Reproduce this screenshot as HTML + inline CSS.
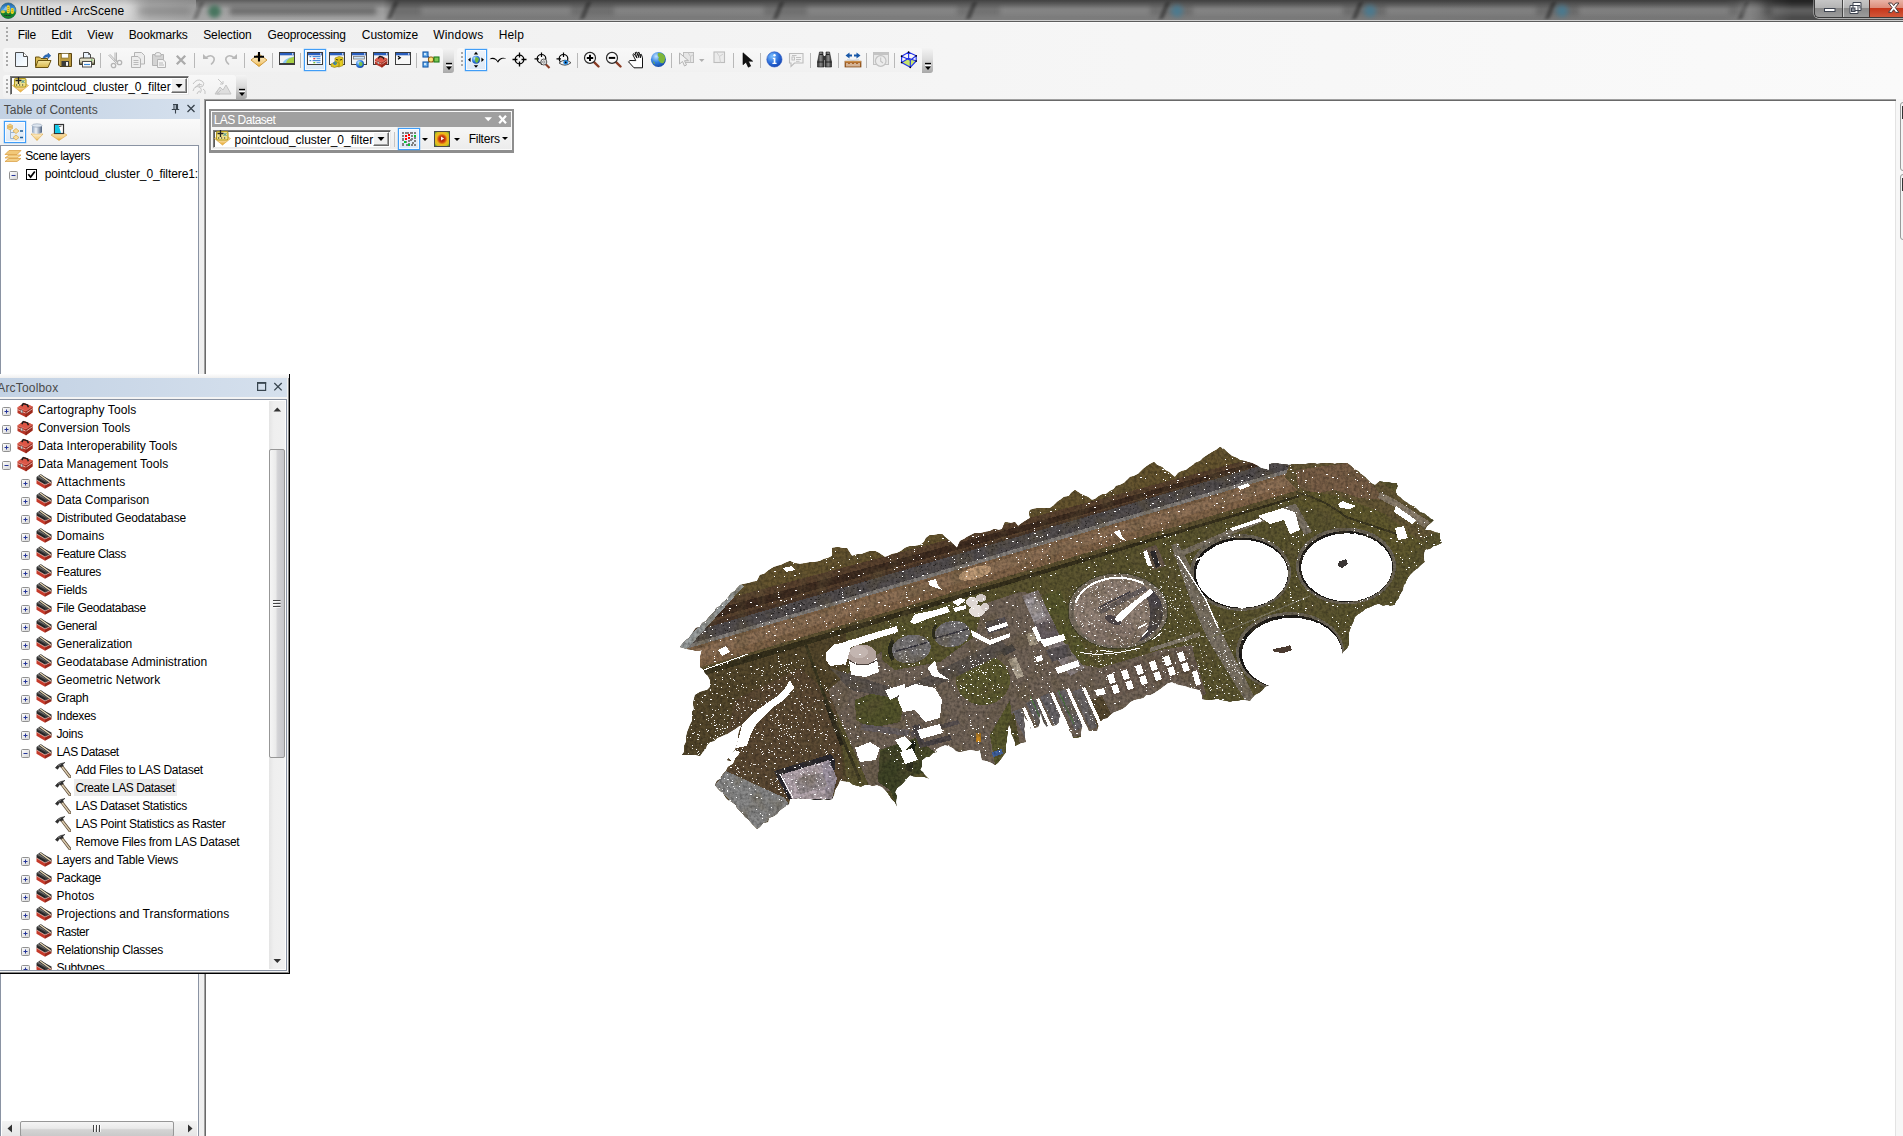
<!DOCTYPE html>
<html><head><meta charset="utf-8"><title>Untitled - ArcScene</title>
<style>
html,body{margin:0;padding:0;width:1903px;height:1136px;overflow:hidden;background:linear-gradient(90deg,#eeeeee 0,#f0f0f0 300px,#f5f5f5 950px,#fafafa 1903px);font-family:"Liberation Sans", sans-serif;}
.a{position:absolute;display:block}
.t{position:absolute;white-space:pre;font-family:"Liberation Sans", sans-serif;}
.sep{position:absolute;width:1px;background:#b8b8b8}
.grip{position:absolute;width:2px;background-image:linear-gradient(#a8a8a8 50%,transparent 50%);background-size:2px 4px}
.tb{position:absolute;background:linear-gradient(#f8f8f8,#f1f1f1);border-radius:3px}
.hl{position:absolute;box-sizing:border-box;border:1px solid #409df7;background:linear-gradient(#eef4fb,#dde9f6);box-shadow:inset 0 0 0 1px rgba(255,255,255,.75),0 0 0 .4px rgba(64,157,247,.5)}
.ovf{position:absolute;background:linear-gradient(#f4f4f4 0%,#dcdcdc 45%,#a8a8a8 100%);border-radius:0 3px 3px 0}
.combo{position:absolute;box-sizing:border-box;background:#fff;border:1px solid;border-color:#7a7a7a #e8e8e8 #e8e8e8 #7a7a7a;box-shadow:inset 1px 1px 0 #5a5a5a}
.cbtn{position:absolute;box-sizing:border-box;background:#f0f0f0;border:1px solid;border-color:#fff #6a6a6a #6a6a6a #fff;box-shadow:inset -1px -1px 0 #a0a0a0}

</style></head><body>
<svg width="0" height="0" style="position:absolute">
<defs>
<linearGradient id="gbox" x1="0" y1="0" x2="1" y2="1"><stop offset="0" stop-color="#fff"/><stop offset="1" stop-color="#d4d4d4"/></linearGradient>
<g id="expp"><rect x="0.500" y="0.500" width="8" height="8" rx="1" fill="url(#gbox)" stroke="#919191"/><path d="M2.500 4.500h4M4.500 2.500v4" stroke="#26369a" stroke-width="1"/></g>
<g id="expm"><rect x="0.500" y="0.500" width="8" height="8" rx="1" fill="url(#gbox)" stroke="#919191"/><path d="M2.500 4.500h4" stroke="#26369a" stroke-width="1"/></g>
<g id="tbx"><path d="M.5 5.500L7 1l8.500 3.500v6L9 15.200.5 11z" fill="#b93425"/><path d="M.5 5.500L7 1l8.500 3.500L9 9z" fill="#dc5646"/><path d="M9 9l6.500-4.500v6L9 15.200z" fill="#9c2a1d"/><path d="M.5 7.600L9 11.200l6.500-4.500" fill="none" stroke="#f3cfc8" stroke-width=".8"/><path d="M.5 5.500L9 9l6.500-4.500" fill="none" stroke="#ef9386" stroke-width=".6"/><path d="M9 9v6.200" stroke="#7f1f15" stroke-width=".7"/><path d="M4.800 4.200l1.400-2.600 4.200 1.300 1 2.300" fill="none" stroke="#1c1c1c" stroke-width="1.500" stroke-linejoin="round"/><path d="M3.800 7.800l1.700.7v2.700l-1.700-.7z" fill="#ececec" stroke="#555" stroke-width=".5"/></g>
<g id="tset"><path d="M.5 6L9 11v3.700L.5 9.700z" fill="#c53a2a"/><path d="M9 11l6.500-3v3.200L9 14.700z" fill="#98281c"/><path d="M.5 3L4 .6l11.500 5.900V8L9 11 .5 6z" fill="#3b3b3b"/><path d="M2 2.300l11.800 6.300" stroke="#777" stroke-width="1.400"/><path d="M4 1l11.300 8.200" stroke="#2a2a2a" stroke-width="2.400"/><path d="M4 1l11.300 8.200" stroke="#ead9b6" stroke-width="1.300"/><path d="M.5 6L9 11l6.500-3" fill="none" stroke="#e9a59b" stroke-width=".7"/><path d="M1 4.500l8 4.700" stroke="#1a1a1a" stroke-width="1"/></g>
<g id="ham"><path d="M6.300 3.700l8.600 11.200" stroke="#5c4a36" stroke-width="3" stroke-linecap="round"/><path d="M6.300 3.700l8.600 11.200" stroke="#dccdb0" stroke-width="1.500" stroke-linecap="round"/><path d="M.4 5.800L2.600 3.300 5.200 1.700 10 .4 7.800 2.200 8.200 4 5.800 5 4.800 4.200 2.600 7.300z" fill="#303030" stroke="#1a1a1a" stroke-width=".5" stroke-linejoin="round"/><path d="M3 3.800l3-1.600" stroke="#8a8a8a" stroke-width=".7"/></g>
</defs></svg>
<svg width="0" height="0" style="position:absolute"><defs>
<linearGradient id="gdia2" x1="0" y1="0" x2="0" y2="1"><stop offset="0" stop-color="#fdf1d2"/><stop offset=".7" stop-color="#f4cf85"/><stop offset="1" stop-color="#eaa51c"/></linearGradient>
<g id="lasico"><path d="M.5 8.500l8-4.500 8 4.500-8 6.500z" fill="url(#gdia2)" stroke="#d9a544" stroke-width=".7"/><rect x="2.500" y="1.500" width="11.500" height="8.500" rx="1.500" fill="#efe08a" stroke="#b39a18" stroke-width="1.100"/>
<path d="M6.500 0v7M3.500 3.500h6" stroke="#222" stroke-width="1.300"/><path d="M9.500 3l3 3M12.500 3l-3 3" stroke="#2a8a9a" stroke-width=".9"/><path d="M4 8h1.200M7 8h1.200M10 8h1.200" stroke="#222" stroke-width="1"/></g>
</defs></svg>

<div id="root" class="a" style="left:0;top:0;width:1903px;height:1136px;overflow:hidden">
<!-- title bar -->
<div class="a" style="left:0;top:0;width:1903px;height:21px;background:linear-gradient(90deg,#cbcbcb 0,#d0d0d0 60px,#cacaca 125px,#aaaaaa 150px,#9c9c9c 198px,#a0a0a0 215px,#9d9d9d 383px,#6e6e6e 396px,#6f6f6f 700px,#727272 1000px,#6b6b6b 1500px,#6a6a6a 1725px,#787878 1750px,#4c4c4c 1775px,#3a3a3a 1792px,#3a3a3a 1815px)"></div>
<div class="a" style="left:196px;top:0;width:1707px;height:9px;background:linear-gradient(180deg,rgba(0,0,0,.42) 0,rgba(0,0,0,.22) 4px,rgba(0,0,0,0) 9px)"></div>
<div class="a" style="left:0;top:0;width:196px;height:6px;background:linear-gradient(180deg,rgba(0,0,0,.12),rgba(0,0,0,0))"></div>
<div class="a" style="left:0;top:12px;width:1903px;height:9px;background:linear-gradient(180deg,rgba(255,255,255,0),rgba(255,255,255,.10))"></div>
<!-- blurred background tabs -->
<div class="a" style="left:138px;top:6px;width:52px;height:10px;background:rgba(90,90,90,.28);filter:blur(3px)"></div>
<div class="a" style="left:230px;top:7px;width:146px;height:8px;background:rgba(60,60,60,.5);filter:blur(2.500px)"></div>
<div class="a" style="left:196px;top:2px;width:5px;height:17px;background:rgba(40,40,40,.35);filter:blur(1.500px);transform:skewX(-22deg)"></div>
<div class="a" style="left:421px;top:7px;width:150px;height:8px;background:rgba(175,175,175,.33);filter:blur(2.500px)"></div>
<div class="a" style="left:390px;top:2px;width:5px;height:17px;background:rgba(25,25,25,.45);filter:blur(1.500px);transform:skewX(-22deg)"></div>
<div class="a" style="left:614px;top:7px;width:150px;height:8px;background:rgba(175,175,175,.33);filter:blur(2.500px)"></div>
<div class="a" style="left:583px;top:2px;width:5px;height:17px;background:rgba(25,25,25,.45);filter:blur(1.500px);transform:skewX(-22deg)"></div>
<div class="a" style="left:807px;top:7px;width:150px;height:8px;background:rgba(175,175,175,.33);filter:blur(2.500px)"></div>
<div class="a" style="left:776px;top:2px;width:5px;height:17px;background:rgba(25,25,25,.45);filter:blur(1.500px);transform:skewX(-22deg)"></div>
<div class="a" style="left:1000px;top:7px;width:150px;height:8px;background:rgba(175,175,175,.33);filter:blur(2.500px)"></div>
<div class="a" style="left:969px;top:2px;width:5px;height:17px;background:rgba(25,25,25,.45);filter:blur(1.500px);transform:skewX(-22deg)"></div>
<div class="a" style="left:1193px;top:7px;width:150px;height:8px;background:rgba(175,175,175,.33);filter:blur(2.500px)"></div>
<div class="a" style="left:1162px;top:2px;width:5px;height:17px;background:rgba(25,25,25,.45);filter:blur(1.500px);transform:skewX(-22deg)"></div>
<div class="a" style="left:1386px;top:7px;width:150px;height:8px;background:rgba(175,175,175,.33);filter:blur(2.500px)"></div>
<div class="a" style="left:1355px;top:2px;width:5px;height:17px;background:rgba(25,25,25,.45);filter:blur(1.500px);transform:skewX(-22deg)"></div>
<div class="a" style="left:1579px;top:7px;width:150px;height:8px;background:rgba(175,175,175,.33);filter:blur(2.500px)"></div>
<div class="a" style="left:1548px;top:2px;width:5px;height:17px;background:rgba(25,25,25,.45);filter:blur(1.500px);transform:skewX(-22deg)"></div>
<div class="a" style="left:1772px;top:7px;width:150px;height:8px;background:rgba(175,175,175,.33);filter:blur(2.500px)"></div>
<div class="a" style="left:1741px;top:2px;width:5px;height:17px;background:rgba(25,25,25,.45);filter:blur(1.500px);transform:skewX(-22deg)"></div>
<div class="a" style="left:208px;top:5px;width:13px;height:13px;border-radius:7px;background:#3a6e55;filter:blur(2px);opacity:.85"></div>
<div class="a" style="left:1171px;top:5px;width:12px;height:12px;border-radius:6px;background:#3d7f9d;filter:blur(2.500px);opacity:.7"></div>
<div class="a" style="left:1364px;top:5px;width:12px;height:12px;border-radius:6px;background:#3d7f9d;filter:blur(2.500px);opacity:.7"></div>
<div class="a" style="left:1556px;top:5px;width:12px;height:12px;border-radius:6px;background:#3d7f9d;filter:blur(2.500px);opacity:.7"></div>
<div class="a" style="left:1740px;top:4px;width:22px;height:12px;background:rgba(150,150,150,.4);filter:blur(3px)"></div>
<!-- title glow behind text -->
<div class="a" style="left:10px;top:2px;width:125px;height:16px;background:rgba(255,255,255,.35);filter:blur(6px)"></div>
<!-- frame line -->
<div class="a" style="left:0;top:20px;width:1903px;height:1px;background:#cfcfcf"></div>
<div class="a" style="left:0;top:21px;width:1903px;height:1px;background:#5c5c5c"></div>
<div class="a" style="left:0;top:22px;width:1903px;height:1px;background:#fcfcfc"></div>
<!-- caption buttons -->
<div class="a" style="left:1814px;top:0;width:89px;height:18px;box-sizing:border-box;border:1px solid #3a3a3a;border-top:none;border-right:none;border-radius:0 0 0 5px;background:linear-gradient(#c6c6c6 0,#b4b4b4 45%,#8a8a8a 50%,#9c9c9c 100%);box-shadow:0 1px 0 rgba(255,255,255,.55),-1px 0 0 rgba(255,255,255,.35)"></div>
<div class="a" style="left:1842px;top:0;width:1px;height:17px;background:#444"></div>
<div class="a" style="left:1843px;top:0;width:1px;height:17px;background:rgba(255,255,255,.5)"></div>
<div class="a" style="left:1869px;top:0;width:34px;height:17px;background:linear-gradient(#e9b3a6 0,#dd8d7b 45%,#c7361a 50%,#d0573a 100%);border-left:1px solid #5a2a22"></div>
<svg class="a" style="left:1814px;top:0" width="89" height="18" viewBox="0 0 89 18">
 <rect x="10.500" y="8.500" width="10.500" height="3" fill="#fff" stroke="#3e4450" stroke-width="1"/>
 <path d="M38.500 2.500h8v8h-8z M35.500 5.500h8v8h-8z" fill="#fff" stroke="#3e4450" transform="translate(0.500 0)"/>
 <path d="M41 5.500h5v3" fill="none" stroke="#3e4450"/>
 <rect x="37.500" y="8" width="3.500" height="3.500" fill="#8a8f98" stroke="#3e4450" stroke-width="1"/>
 <path transform="translate(4.500 0)" d="M70 3h3.200l2 2.600 2-2.600h3.200l-3.600 4.600 3.600 4.800h-3.200l-2-2.700-2 2.700h-3.200l3.600-4.800z" fill="#fff" stroke="#4a3a3a" stroke-width="1" stroke-linejoin="round"/>
</svg>
<!-- menu gripper -->
<div class="grip" style="left:6px;top:27px;height:16px"></div>
<!-- toolbar strips -->
<div class="tb" style="left:3px;top:48px;width:440px;height:24px"></div>
<div class="ovf" style="left:443px;top:48px;width:11px;height:25px"></div>
<div class="tb" style="left:457px;top:48px;width:465px;height:24px"></div>
<div class="ovf" style="left:922px;top:48px;width:11px;height:25px"></div>
<div class="tb" style="left:3px;top:75px;width:233px;height:23px"></div>
<div class="ovf" style="left:236px;top:75px;width:11px;height:24px"></div>
<div class="grip" style="left:6px;top:52px;height:16px"></div>
<div class="grip" style="left:461px;top:52px;height:16px"></div>
<div class="grip" style="left:6px;top:79px;height:16px"></div>
<!-- overflow glyphs -->
<svg class="a" style="left:445px;top:62px" width="8" height="9" viewBox="0 0 8 9"><path d="M1 1.500h6" stroke="#000" stroke-width="1.300"/><path d="M1 3.500h6" stroke="#fff" stroke-width="1"/><path d="M1 4.500h6l-3 3.500z" fill="#000"/></svg>
<svg class="a" style="left:924px;top:62px" width="8" height="9" viewBox="0 0 8 9"><path d="M1 1.500h6" stroke="#000" stroke-width="1.300"/><path d="M1 3.500h6" stroke="#fff" stroke-width="1"/><path d="M1 4.500h6l-3 3.500z" fill="#000"/></svg>
<svg class="a" style="left:238px;top:88px" width="8" height="9" viewBox="0 0 8 9"><path d="M1 1.500h6" stroke="#000" stroke-width="1.300"/><path d="M1 3.500h6" stroke="#fff" stroke-width="1"/><path d="M1 4.500h6l-3 3.500z" fill="#000"/></svg>
<!-- separators toolbar 1 -->
<div class="sep" style="left:100px;top:53px;height:15px"></div>
<div class="sep" style="left:194px;top:53px;height:15px"></div>
<div class="sep" style="left:244px;top:53px;height:15px"></div>
<div class="sep" style="left:272px;top:53px;height:15px"></div>
<div class="sep" style="left:300px;top:53px;height:15px"></div>
<div class="sep" style="left:416px;top:53px;height:15px"></div>
<!-- highlighted buttons -->
<div class="hl" style="left:304px;top:49px;width:22px;height:22px"></div>
<div class="hl" style="left:465px;top:49px;width:22px;height:22px"></div>
<!-- layer combo (toolbar 2) -->
<div class="combo" style="left:10px;top:76px;width:179px;height:19px"></div>
<div class="cbtn" style="left:171px;top:78px;width:16px;height:15px"></div>
<svg class="a" style="left:175px;top:84px" width="8" height="4" viewBox="0 0 8 4"><path d="M0.500 0h7l-3.500 4z" fill="#000"/></svg>
<!-- separators tools toolbar -->
<div class="sep" style="left:577px;top:53px;height:15px"></div>
<div class="sep" style="left:671px;top:53px;height:15px"></div>
<div class="sep" style="left:733px;top:53px;height:15px"></div>
<div class="sep" style="left:760px;top:53px;height:15px"></div>
<div class="sep" style="left:810px;top:53px;height:15px"></div>
<div class="sep" style="left:838px;top:53px;height:15px"></div>
<div class="sep" style="left:866px;top:53px;height:15px"></div>
<div class="sep" style="left:894px;top:53px;height:15px"></div>

<!-- scene view -->
<div class="a" style="left:204px;top:99px;width:1692px;height:1037px;background:#fff"></div>
<div class="a" style="left:204px;top:99px;width:1692px;height:1px;background:#a0a0a0"></div>
<div class="a" style="left:204px;top:100px;width:1692px;height:1px;background:#696969"></div>
<div class="a" style="left:204px;top:99px;width:1px;height:1037px;background:#a0a0a0"></div>
<div class="a" style="left:205px;top:100px;width:1px;height:1036px;background:#696969"></div>
<div class="a" style="left:1895px;top:101px;width:1px;height:1035px;background:#e3e3e3"></div>
<div class="a" style="left:1896px;top:99px;width:7px;height:1037px;background:#f7f7f7"></div>
<!-- right auto-hide tabs -->
<div class="a" style="left:1900px;top:102px;width:6px;height:69px;box-sizing:border-box;border:1px solid #9a9a9a;border-radius:3px 0 0 3px;background:#f4f4f4"></div>
<div class="a" style="left:1900px;top:174px;width:6px;height:66px;box-sizing:border-box;border:1px solid #9a9a9a;border-radius:3px 0 0 3px;background:#f4f4f4"></div>
<div class="a" style="left:1902px;top:106px;width:1px;height:13px;background:#333"></div>
<div class="a" style="left:1902px;top:178px;width:1px;height:13px;background:#333"></div>

<svg class="a" style="left:660px;top:430px" width="800" height="420" viewBox="660 430 800 420" shape-rendering="crispEdges">
<defs>
<clipPath id="csil"><polygon points="680.0,647.0 683.0,643.0 686.0,640.0 689.0,638.0 691.0,635.0 693.0,632.0 696.0,628.0 700.0,627.0 702.0,623.0 706.0,621.0 709.0,617.0 712.0,614.0 715.0,611.0 716.0,608.0 720.0,606.0 722.0,603.0 726.0,600.0 729.0,596.0 731.0,593.0 735.0,591.0 737.0,588.0 740.0,585.0 744.0,584.0 749.0,583.0 752.0,582.0 757.0,581.0 760.0,575.0 764.0,574.0 769.0,570.0 774.0,567.0 777.0,566.0 781.0,565.0 785.0,563.0 790.0,561.0 794.0,563.0 800.0,564.0 806.0,563.0 811.0,562.0 815.0,562.0 820.0,561.0 824.0,559.0 828.0,558.0 832.0,556.0 832.0,552.0 832.0,548.0 838.0,547.0 842.0,548.0 847.0,548.0 850.0,553.0 852.0,556.0 858.0,554.0 862.0,554.0 867.0,552.0 870.0,551.0 875.0,551.0 879.0,553.0 885.0,557.0 888.0,556.0 892.0,554.0 897.0,553.0 901.0,551.0 905.0,548.0 910.0,546.0 915.0,546.0 920.0,545.0 924.0,542.0 926.0,538.0 930.0,535.0 934.0,535.0 939.0,534.0 942.0,534.0 945.0,537.0 950.0,541.0 953.0,544.0 957.0,548.0 960.0,541.0 964.0,539.0 967.0,537.0 971.0,535.0 975.0,533.0 981.0,533.0 985.0,532.0 990.0,531.0 994.0,529.0 999.0,530.0 1002.0,529.0 1005.0,522.0 1011.0,523.0 1015.0,522.0 1018.0,526.0 1022.0,523.0 1025.0,521.0 1030.0,518.0 1029.0,513.0 1030.0,510.0 1033.0,509.0 1038.0,508.0 1041.0,508.0 1045.0,508.0 1050.0,508.0 1053.0,506.0 1057.0,502.0 1060.0,500.0 1064.0,497.0 1069.0,496.0 1071.0,493.0 1075.0,490.0 1078.0,492.0 1083.0,495.0 1088.0,497.0 1092.0,500.0 1095.0,499.0 1099.0,496.0 1103.0,494.0 1106.0,494.0 1110.0,491.0 1114.0,489.0 1116.0,486.0 1120.0,485.0 1124.0,483.0 1127.0,480.0 1130.0,477.0 1134.0,476.0 1138.0,474.0 1141.0,471.0 1143.0,469.0 1147.0,466.0 1150.0,464.0 1154.0,462.0 1157.0,465.0 1162.0,467.0 1165.0,470.0 1169.0,472.0 1171.0,474.0 1175.0,477.0 1178.0,473.0 1182.0,471.0 1186.0,470.0 1190.0,467.0 1193.0,465.0 1195.0,463.0 1200.0,461.0 1203.0,458.0 1206.0,456.0 1209.0,454.0 1214.0,451.0 1216.0,450.0 1220.0,447.0 1224.0,449.0 1227.0,452.0 1232.0,456.0 1237.0,458.0 1240.0,460.0 1245.0,461.0 1248.0,462.0 1252.0,463.0 1258.0,466.0 1261.0,468.0 1265.0,469.0 1269.0,470.0 1269.0,464.0 1274.0,463.0 1277.0,463.0 1281.0,464.0 1285.0,464.0 1289.0,465.0 1293.0,464.0 1298.0,464.0 1302.0,464.0 1306.0,464.0 1310.0,463.0 1314.0,463.0 1317.0,464.0 1322.0,463.0 1327.0,463.0 1330.0,463.0 1335.0,464.0 1338.0,463.0 1342.0,463.0 1347.0,463.0 1351.0,466.0 1354.0,469.0 1358.0,471.0 1361.0,474.0 1365.0,477.0 1368.0,480.0 1371.0,483.0 1375.0,485.0 1380.0,481.0 1385.0,482.0 1389.0,482.0 1393.0,483.0 1397.0,483.0 1398.0,486.0 1396.0,491.0 1397.0,495.0 1400.0,497.0 1403.0,500.0 1408.0,503.0 1410.0,505.0 1414.0,506.0 1418.0,510.0 1420.0,512.0 1424.0,513.0 1428.0,516.0 1430.0,518.0 1434.0,520.0 1431.0,523.0 1427.0,526.0 1425.0,530.0 1430.0,530.0 1435.0,532.0 1440.0,533.0 1440.0,538.0 1442.0,543.0 1438.0,545.0 1433.0,547.0 1430.0,549.0 1425.0,550.0 1424.0,554.0 1424.0,559.0 1425.0,562.0 1421.0,565.0 1417.0,569.0 1414.0,571.0 1410.0,575.0 1407.0,580.0 1406.0,583.0 1404.0,585.0 1403.0,590.0 1400.0,595.0 1399.0,598.0 1396.0,602.0 1395.0,605.0 1390.0,606.0 1387.0,605.0 1383.0,606.0 1379.0,604.0 1375.0,605.0 1371.0,607.0 1366.0,609.0 1362.0,612.0 1359.0,614.0 1355.0,617.0 1354.0,621.0 1352.0,625.0 1350.0,630.0 1349.0,634.0 1349.0,639.0 1349.0,645.0 1347.0,649.0 1343.0,652.0 1342.0,654.0 1339.0,658.0 1336.0,662.0 1334.0,666.0 1332.0,669.0 1330.0,673.0 1328.0,677.0 1326.0,680.0 1324.0,683.0 1321.0,686.0 1320.0,690.0 1315.0,690.0 1311.0,688.0 1306.0,689.0 1304.0,689.0 1298.0,687.0 1294.0,687.0 1290.0,687.0 1286.0,688.0 1283.0,686.0 1277.0,687.0 1273.0,685.0 1269.0,685.0 1265.0,687.0 1263.0,690.0 1259.0,693.0 1255.0,695.0 1252.0,698.0 1250.0,701.0 1245.0,700.0 1241.0,700.0 1238.0,701.0 1234.0,701.0 1230.0,702.0 1225.0,701.0 1220.0,700.0 1217.0,699.0 1212.0,700.0 1206.0,700.0 1202.0,699.0 1202.0,695.0 1200.0,690.0 1196.0,689.0 1191.0,688.0 1188.0,687.0 1185.0,686.0 1180.0,685.0 1176.0,684.0 1172.0,682.0 1168.0,683.0 1164.0,686.0 1160.0,689.0 1157.0,691.0 1154.0,693.0 1150.0,695.0 1146.0,695.0 1143.0,698.0 1138.0,699.0 1134.0,700.0 1130.0,702.0 1125.0,707.0 1122.0,709.0 1117.0,711.0 1114.0,712.0 1110.0,715.0 1107.0,718.0 1103.0,719.0 1100.0,722.0 1098.0,727.0 1097.0,731.0 1094.0,731.0 1089.0,731.0 1087.0,726.0 1084.0,723.0 1083.0,719.0 1083.0,723.0 1082.0,727.0 1081.0,732.0 1081.0,737.0 1077.0,738.0 1073.0,738.0 1072.0,734.0 1069.0,730.0 1067.0,725.0 1066.0,721.0 1065.0,719.0 1062.0,714.0 1059.0,718.0 1059.0,722.0 1056.0,725.0 1051.0,726.0 1047.0,727.0 1044.0,723.0 1042.0,718.0 1041.0,713.0 1039.0,718.0 1040.0,722.0 1038.0,727.0 1031.0,729.0 1030.0,725.0 1028.0,721.0 1025.0,718.0 1024.0,713.0 1024.0,716.0 1024.0,721.0 1025.0,725.0 1024.0,729.0 1025.0,734.0 1025.0,738.0 1026.0,742.0 1021.0,743.0 1015.0,746.0 1015.0,742.0 1013.0,737.0 1011.0,733.0 1011.0,729.0 1009.0,724.0 1008.0,728.0 1008.0,731.0 1007.0,737.0 1007.0,741.0 1006.0,744.0 1006.0,747.0 1006.0,752.0 1003.0,756.0 1001.0,759.0 998.0,763.0 995.0,765.0 992.0,763.0 987.0,761.0 982.0,760.0 981.0,755.0 980.0,750.0 977.0,751.0 972.0,750.0 969.0,750.0 964.0,751.0 960.0,752.0 956.0,751.0 953.0,748.0 949.0,746.0 945.0,745.0 940.0,747.0 935.0,750.0 937.0,752.0 933.0,753.0 929.0,757.0 926.0,757.0 922.0,760.0 922.0,766.0 920.0,770.0 923.0,772.0 925.0,775.0 929.0,779.0 924.0,777.0 919.0,777.0 915.0,777.0 910.0,775.0 907.0,778.0 904.0,782.0 901.0,785.0 897.0,788.0 895.0,792.0 897.0,796.0 896.0,802.0 897.0,807.0 895.0,803.0 892.0,800.0 890.0,797.0 888.0,794.0 885.0,790.0 882.0,787.0 877.0,785.0 872.0,786.0 870.0,785.0 865.0,785.0 861.0,787.0 857.0,786.0 853.0,785.0 849.0,782.0 843.0,781.0 840.0,780.0 838.0,785.0 835.0,790.0 834.0,795.0 832.0,799.0 828.0,800.0 824.0,799.0 818.0,800.0 815.0,800.0 811.0,799.0 806.0,799.0 803.0,799.0 798.0,798.0 794.0,799.0 790.0,799.0 789.0,804.0 786.0,806.0 783.0,808.0 779.0,811.0 777.0,814.0 774.0,816.0 769.0,818.0 768.0,822.0 763.0,823.0 760.0,827.0 757.0,829.0 754.0,826.0 752.0,824.0 748.0,819.0 745.0,817.0 743.0,814.0 741.0,812.0 737.0,808.0 736.0,805.0 732.0,802.0 728.0,800.0 726.0,798.0 723.0,793.0 720.0,791.0 718.0,789.0 715.0,785.0 717.0,781.0 720.0,779.0 723.0,774.0 726.0,771.0 728.0,767.0 733.0,764.0 735.0,760.0 731.0,761.0 727.0,760.0 731.0,756.0 732.0,754.0 735.0,750.0 737.0,745.0 738.0,741.0 738.0,737.0 739.0,732.0 740.0,729.0 742.0,725.0 739.0,726.0 735.0,729.0 730.0,732.0 727.0,734.0 722.0,736.0 717.0,738.0 714.0,741.0 710.0,742.0 707.0,745.0 706.0,748.0 702.0,753.0 700.0,756.0 696.0,755.0 690.0,755.0 687.0,755.0 682.0,755.0 684.0,752.0 684.0,746.0 686.0,742.0 686.0,738.0 687.0,733.0 688.0,730.0 690.0,725.0 692.0,721.0 692.0,715.0 692.0,712.0 694.0,709.0 693.0,703.0 694.0,699.0 695.0,695.0 700.0,692.0 703.0,691.0 707.0,690.0 710.0,687.0 710.0,680.0 708.0,676.0 705.0,673.0 703.0,669.0 700.0,667.0 700.0,663.0 700.0,658.0 701.0,654.0 702.0,650.0 697.0,651.0 693.0,650.0 687.0,649.0"/></clipPath>
<pattern id="sp1" width="64" height="64" patternUnits="userSpaceOnUse"><path d="M16 10.5h1M26 63.5h2M62 57.5h1M8 53.5h1M57 30.5h1M54 15.5h1M18 37.5h1M17 47.5h1M16 25.5h1M11 31.5h1M18 24.5h1M25 32.5h2M32 29.5h1M6 59.5h2M6 0.5h1M52 29.5h2M58 47.5h1M18 29.5h1M12 24.5h2M23 22.5h1M16 0.5h1M38 44.5h1M23 43.5h1M13 32.5h1M46 26.5h2M52 41.5h1M23 23.5h1M4 26.5h1M31 61.5h1M6 50.5h1M9 11.5h1M25 34.5h1M18 39.5h1M3 39.5h1M56 45.5h1M1 46.5h1M25 51.5h1M0 55.5h2M27 14.5h2M25 46.5h1M10 16.5h1M35 18.5h1M58 50.5h1M39 47.5h1M10 18.5h1M10 21.5h2" stroke="#fff" stroke-width="1" fill="none"/></pattern>
<pattern id="sp2" width="64" height="64" patternUnits="userSpaceOnUse"><path d="M6 49.5h1M51 25.5h1M53 5.5h2M30 40.5h1M59 49.5h1M45 20.5h1M54 28.5h1M39 25.5h2M11 27.5h1M60 20.5h1M7 19.5h1M46 24.5h1M35 4.5h1M20 15.5h1M29 39.5h1M19 31.5h1M42 47.5h1M28 22.5h1M39 62.5h1M28 58.5h2M51 60.5h1M4 16.5h1M23 11.5h2M32 5.5h1M8 10.5h2M20 10.5h1M32 48.5h1M50 17.5h1M4 14.5h1M62 62.5h1M51 21.5h1M46 28.5h1M22 32.5h1M57 35.5h2M29 18.5h1M61 61.5h1M16 30.5h1M2 25.5h1M10 35.5h1M57 48.5h1M50 33.5h1M33 6.5h1M23 57.5h1M37 13.5h1M34 50.5h1M23 33.5h1M23 18.5h1M48 10.5h1M11 6.5h1M33 32.5h1M61 40.5h1M47 4.5h1M18 55.5h1M23 6.5h1M14 5.5h1M0 45.5h1M33 45.5h1M26 38.5h1M13 46.5h1M30 20.5h1M59 31.5h1M28 12.5h1M9 34.5h1M16 1.5h1M52 44.5h1M37 56.5h1M33 63.5h1M57 0.5h1M34 3.5h1M15 20.5h1M49 13.5h1M35 25.5h1M12 53.5h2M11 39.5h1M40 6.5h2M46 61.5h1M0 48.5h2M47 59.5h1M41 57.5h1M6 33.5h1M2 15.5h1M47 33.5h1M17 55.5h1M58 33.5h1M59 27.5h1M32 1.5h1M57 30.5h2M12 20.5h1M20 24.5h2M21 30.5h1M54 60.5h1M33 0.5h2M27 29.5h1M19 27.5h1M37 9.5h1M10 18.5h1M7 13.5h1M10 44.5h2M44 3.5h1M8 5.5h1M47 5.5h1M37 46.5h1M61 8.5h2M48 49.5h1M13 26.5h1M2 11.5h2M40 36.5h1M8 12.5h1M41 26.5h1M21 54.5h1M22 32.5h2M3 47.5h2M49 60.5h2M39 3.5h1M1 55.5h1M6 44.5h1M3 27.5h1M52 11.5h1M18 21.5h1M33 25.5h1" stroke="#fff" stroke-width="1" fill="none"/></pattern>
<pattern id="spd" width="64" height="64" patternUnits="userSpaceOnUse"><path d="M48 6.5h1M31 12.5h1M50 23.5h2M37 44.5h2M32 33.5h1M10 36.5h2M60 29.5h1M7 10.5h1M44 13.5h1M22 12.5h1M25 11.5h1M41 3.5h1M19 33.5h1M34 21.5h1M56 29.5h2M8 4.5h1M20 19.5h2M28 41.5h1M28 32.5h1M8 42.5h1M56 30.5h1M17 38.5h1M52 19.5h1M62 31.5h1M38 44.5h1M20 24.5h1M61 13.5h1M42 13.5h1M9 18.5h1M46 38.5h1M12 13.5h1M6 35.5h1M24 59.5h1M25 55.5h1M32 37.5h1M9 32.5h1M25 0.5h1M58 55.5h1M37 53.5h2M42 29.5h1M41 15.5h1M20 33.5h1M6 53.5h1M25 20.5h1M27 61.5h1M39 52.5h1M42 23.5h2M20 1.5h1M31 13.5h1M34 27.5h1M50 25.5h1M6 58.5h1M45 60.5h1M40 47.5h1M26 58.5h1M43 23.5h1M48 15.5h1M39 45.5h1M16 35.5h1M3 1.5h1M58 53.5h1M43 45.5h1M6 28.5h1M25 28.5h2M61 50.5h1M10 16.5h2M4 24.5h1M35 28.5h2M9 45.5h1M53 52.5h1M18 16.5h1M30 45.5h1M14 34.5h1M43 32.5h2M43 23.5h1M51 35.5h1M41 38.5h1M31 54.5h1M5 46.5h1M19 49.5h1M52 41.5h1M8 44.5h1M0 1.5h1M4 37.5h1M6 18.5h2M11 57.5h1M9 26.5h2M50 21.5h1M44 11.5h1M57 38.5h1M44 27.5h1M47 56.5h1M7 15.5h1M14 17.5h1M35 7.5h1M57 18.5h1M15 63.5h1M38 0.5h1M20 59.5h1M31 37.5h2M23 54.5h1M61 9.5h1M23 3.5h1M2 42.5h2M6 61.5h1M57 18.5h1M45 53.5h1M21 12.5h2M23 43.5h1M33 26.5h1M21 54.5h1M3 37.5h1M52 63.5h1M32 34.5h2M22 26.5h1M50 15.5h1M20 38.5h1M62 11.5h1M2 51.5h1M56 51.5h1M3 51.5h1M0 5.5h1M58 60.5h1M42 7.5h1M58 48.5h1M40 10.5h1M42 58.5h1M11 12.5h1M55 4.5h1M6 1.5h1M52 17.5h1M35 33.5h2M11 53.5h1M1 55.5h1M37 6.5h1M33 5.5h2M49 53.5h1M58 51.5h1M0 49.5h1M60 19.5h1M26 13.5h1M30 27.5h2M40 1.5h1M0 15.5h2M54 11.5h1M7 16.5h1M17 31.5h1M47 23.5h2M23 18.5h1M5 37.5h1" stroke="#2e2a2a" stroke-width="1" fill="none"/></pattern>
<pattern id="spg" width="64" height="64" patternUnits="userSpaceOnUse"><path d="M45 63.5h1M59 32.5h2M3 4.5h1M0 10.5h1M19 21.5h2M53 62.5h1M20 47.5h2M46 56.5h1M10 18.5h2M7 46.5h2M10 53.5h1M49 57.5h2M50 42.5h1M3 42.5h2M46 1.5h2M38 39.5h1M62 31.5h1M43 48.5h1M57 29.5h2M18 0.5h1M17 54.5h1M58 5.5h1M9 18.5h1M54 63.5h1M5 62.5h1M12 29.5h1M3 50.5h1M13 32.5h1M0 49.5h1M5 45.5h1M14 50.5h1M57 33.5h2M33 41.5h1M37 25.5h1M12 11.5h1M44 37.5h1M36 45.5h1M33 19.5h1M59 63.5h1M6 47.5h1M50 10.5h1M38 3.5h1M33 2.5h1M13 62.5h1M13 33.5h2M17 54.5h1M28 16.5h1M2 43.5h1M11 48.5h1M3 4.5h1M55 58.5h1M54 8.5h2M40 50.5h2M45 11.5h1M36 29.5h1M61 50.5h1M54 20.5h1M15 28.5h1M60 32.5h2M3 3.5h2M3 33.5h1M45 61.5h1M9 40.5h1M60 25.5h1M19 56.5h1M6 60.5h1M16 49.5h1M30 48.5h1M15 18.5h2M57 1.5h1M58 24.5h1M10 28.5h1M39 47.5h2M8 57.5h2M59 49.5h2M40 9.5h1M21 41.5h2M30 14.5h1M9 42.5h1M3 23.5h1M35 18.5h1M9 34.5h1M15 19.5h1M36 37.5h1M10 33.5h1M20 58.5h2M7 19.5h2M3 27.5h1M53 36.5h1M48 25.5h2M27 33.5h2M59 30.5h1M18 53.5h2M3 37.5h1M40 2.5h1M32 43.5h1M28 0.5h1M60 36.5h1M27 5.5h2M13 35.5h1M8 23.5h1M14 22.5h1M5 11.5h2M46 63.5h1M11 26.5h1M42 24.5h1M12 1.5h1M46 52.5h2M58 7.5h1M22 42.5h1M40 63.5h1M26 61.5h1M42 34.5h1M36 46.5h1M44 47.5h1M54 0.5h1M59 57.5h2M4 15.5h1M15 41.5h1M55 48.5h1" stroke="#7d7a7a" stroke-width="1" fill="none"/></pattern>
<filter id="tx" x="0" y="0" width="100%" height="100%"><feTurbulence type="fractalNoise" baseFrequency="0.35" numOctaves="2" seed="3"/><feColorMatrix values="0 0 0 0 0  0 0 0 0 0  0 0 0 0 0  1.6 0 0 0 -0.55"/></filter>
<filter id="tx2" x="0" y="0" width="100%" height="100%"><feTurbulence type="fractalNoise" baseFrequency="0.06" numOctaves="2" seed="9"/><feColorMatrix values="0 0 0 0 0.12  0 0 0 0 0.09  0 0 0 0 0.04  1.2 0 0 0 -0.55"/></filter>
</defs>
<g clip-path="url(#csil)">
<polygon points="680.0,647.0 683.0,643.0 686.0,640.0 689.0,638.0 691.0,635.0 693.0,632.0 696.0,628.0 700.0,627.0 702.0,623.0 706.0,621.0 709.0,617.0 712.0,614.0 715.0,611.0 716.0,608.0 720.0,606.0 722.0,603.0 726.0,600.0 729.0,596.0 731.0,593.0 735.0,591.0 737.0,588.0 740.0,585.0 744.0,584.0 749.0,583.0 752.0,582.0 757.0,581.0 760.0,575.0 764.0,574.0 769.0,570.0 774.0,567.0 777.0,566.0 781.0,565.0 785.0,563.0 790.0,561.0 794.0,563.0 800.0,564.0 806.0,563.0 811.0,562.0 815.0,562.0 820.0,561.0 824.0,559.0 828.0,558.0 832.0,556.0 832.0,552.0 832.0,548.0 838.0,547.0 842.0,548.0 847.0,548.0 850.0,553.0 852.0,556.0 858.0,554.0 862.0,554.0 867.0,552.0 870.0,551.0 875.0,551.0 879.0,553.0 885.0,557.0 888.0,556.0 892.0,554.0 897.0,553.0 901.0,551.0 905.0,548.0 910.0,546.0 915.0,546.0 920.0,545.0 924.0,542.0 926.0,538.0 930.0,535.0 934.0,535.0 939.0,534.0 942.0,534.0 945.0,537.0 950.0,541.0 953.0,544.0 957.0,548.0 960.0,541.0 964.0,539.0 967.0,537.0 971.0,535.0 975.0,533.0 981.0,533.0 985.0,532.0 990.0,531.0 994.0,529.0 999.0,530.0 1002.0,529.0 1005.0,522.0 1011.0,523.0 1015.0,522.0 1018.0,526.0 1022.0,523.0 1025.0,521.0 1030.0,518.0 1029.0,513.0 1030.0,510.0 1033.0,509.0 1038.0,508.0 1041.0,508.0 1045.0,508.0 1050.0,508.0 1053.0,506.0 1057.0,502.0 1060.0,500.0 1064.0,497.0 1069.0,496.0 1071.0,493.0 1075.0,490.0 1078.0,492.0 1083.0,495.0 1088.0,497.0 1092.0,500.0 1095.0,499.0 1099.0,496.0 1103.0,494.0 1106.0,494.0 1110.0,491.0 1114.0,489.0 1116.0,486.0 1120.0,485.0 1124.0,483.0 1127.0,480.0 1130.0,477.0 1134.0,476.0 1138.0,474.0 1141.0,471.0 1143.0,469.0 1147.0,466.0 1150.0,464.0 1154.0,462.0 1157.0,465.0 1162.0,467.0 1165.0,470.0 1169.0,472.0 1171.0,474.0 1175.0,477.0 1178.0,473.0 1182.0,471.0 1186.0,470.0 1190.0,467.0 1193.0,465.0 1195.0,463.0 1200.0,461.0 1203.0,458.0 1206.0,456.0 1209.0,454.0 1214.0,451.0 1216.0,450.0 1220.0,447.0 1224.0,449.0 1227.0,452.0 1232.0,456.0 1237.0,458.0 1240.0,460.0 1245.0,461.0 1248.0,462.0 1252.0,463.0 1258.0,466.0 1261.0,468.0 1265.0,469.0 1269.0,470.0 1269.0,464.0 1274.0,463.0 1277.0,463.0 1281.0,464.0 1285.0,464.0 1289.0,465.0 1293.0,464.0 1298.0,464.0 1302.0,464.0 1306.0,464.0 1310.0,463.0 1314.0,463.0 1317.0,464.0 1322.0,463.0 1327.0,463.0 1330.0,463.0 1335.0,464.0 1338.0,463.0 1342.0,463.0 1347.0,463.0 1351.0,466.0 1354.0,469.0 1358.0,471.0 1361.0,474.0 1365.0,477.0 1368.0,480.0 1371.0,483.0 1375.0,485.0 1380.0,481.0 1385.0,482.0 1389.0,482.0 1393.0,483.0 1397.0,483.0 1398.0,486.0 1396.0,491.0 1397.0,495.0 1400.0,497.0 1403.0,500.0 1408.0,503.0 1410.0,505.0 1414.0,506.0 1418.0,510.0 1420.0,512.0 1424.0,513.0 1428.0,516.0 1430.0,518.0 1434.0,520.0 1431.0,523.0 1427.0,526.0 1425.0,530.0 1430.0,530.0 1435.0,532.0 1440.0,533.0 1440.0,538.0 1442.0,543.0 1438.0,545.0 1433.0,547.0 1430.0,549.0 1425.0,550.0 1424.0,554.0 1424.0,559.0 1425.0,562.0 1421.0,565.0 1417.0,569.0 1414.0,571.0 1410.0,575.0 1407.0,580.0 1406.0,583.0 1404.0,585.0 1403.0,590.0 1400.0,595.0 1399.0,598.0 1396.0,602.0 1395.0,605.0 1390.0,606.0 1387.0,605.0 1383.0,606.0 1379.0,604.0 1375.0,605.0 1371.0,607.0 1366.0,609.0 1362.0,612.0 1359.0,614.0 1355.0,617.0 1354.0,621.0 1352.0,625.0 1350.0,630.0 1349.0,634.0 1349.0,639.0 1349.0,645.0 1347.0,649.0 1343.0,652.0 1342.0,654.0 1339.0,658.0 1336.0,662.0 1334.0,666.0 1332.0,669.0 1330.0,673.0 1328.0,677.0 1326.0,680.0 1324.0,683.0 1321.0,686.0 1320.0,690.0 1315.0,690.0 1311.0,688.0 1306.0,689.0 1304.0,689.0 1298.0,687.0 1294.0,687.0 1290.0,687.0 1286.0,688.0 1283.0,686.0 1277.0,687.0 1273.0,685.0 1269.0,685.0 1265.0,687.0 1263.0,690.0 1259.0,693.0 1255.0,695.0 1252.0,698.0 1250.0,701.0 1245.0,700.0 1241.0,700.0 1238.0,701.0 1234.0,701.0 1230.0,702.0 1225.0,701.0 1220.0,700.0 1217.0,699.0 1212.0,700.0 1206.0,700.0 1202.0,699.0 1202.0,695.0 1200.0,690.0 1196.0,689.0 1191.0,688.0 1188.0,687.0 1185.0,686.0 1180.0,685.0 1176.0,684.0 1172.0,682.0 1168.0,683.0 1164.0,686.0 1160.0,689.0 1157.0,691.0 1154.0,693.0 1150.0,695.0 1146.0,695.0 1143.0,698.0 1138.0,699.0 1134.0,700.0 1130.0,702.0 1125.0,707.0 1122.0,709.0 1117.0,711.0 1114.0,712.0 1110.0,715.0 1107.0,718.0 1103.0,719.0 1100.0,722.0 1098.0,727.0 1097.0,731.0 1094.0,731.0 1089.0,731.0 1087.0,726.0 1084.0,723.0 1083.0,719.0 1083.0,723.0 1082.0,727.0 1081.0,732.0 1081.0,737.0 1077.0,738.0 1073.0,738.0 1072.0,734.0 1069.0,730.0 1067.0,725.0 1066.0,721.0 1065.0,719.0 1062.0,714.0 1059.0,718.0 1059.0,722.0 1056.0,725.0 1051.0,726.0 1047.0,727.0 1044.0,723.0 1042.0,718.0 1041.0,713.0 1039.0,718.0 1040.0,722.0 1038.0,727.0 1031.0,729.0 1030.0,725.0 1028.0,721.0 1025.0,718.0 1024.0,713.0 1024.0,716.0 1024.0,721.0 1025.0,725.0 1024.0,729.0 1025.0,734.0 1025.0,738.0 1026.0,742.0 1021.0,743.0 1015.0,746.0 1015.0,742.0 1013.0,737.0 1011.0,733.0 1011.0,729.0 1009.0,724.0 1008.0,728.0 1008.0,731.0 1007.0,737.0 1007.0,741.0 1006.0,744.0 1006.0,747.0 1006.0,752.0 1003.0,756.0 1001.0,759.0 998.0,763.0 995.0,765.0 992.0,763.0 987.0,761.0 982.0,760.0 981.0,755.0 980.0,750.0 977.0,751.0 972.0,750.0 969.0,750.0 964.0,751.0 960.0,752.0 956.0,751.0 953.0,748.0 949.0,746.0 945.0,745.0 940.0,747.0 935.0,750.0 937.0,752.0 933.0,753.0 929.0,757.0 926.0,757.0 922.0,760.0 922.0,766.0 920.0,770.0 923.0,772.0 925.0,775.0 929.0,779.0 924.0,777.0 919.0,777.0 915.0,777.0 910.0,775.0 907.0,778.0 904.0,782.0 901.0,785.0 897.0,788.0 895.0,792.0 897.0,796.0 896.0,802.0 897.0,807.0 895.0,803.0 892.0,800.0 890.0,797.0 888.0,794.0 885.0,790.0 882.0,787.0 877.0,785.0 872.0,786.0 870.0,785.0 865.0,785.0 861.0,787.0 857.0,786.0 853.0,785.0 849.0,782.0 843.0,781.0 840.0,780.0 838.0,785.0 835.0,790.0 834.0,795.0 832.0,799.0 828.0,800.0 824.0,799.0 818.0,800.0 815.0,800.0 811.0,799.0 806.0,799.0 803.0,799.0 798.0,798.0 794.0,799.0 790.0,799.0 789.0,804.0 786.0,806.0 783.0,808.0 779.0,811.0 777.0,814.0 774.0,816.0 769.0,818.0 768.0,822.0 763.0,823.0 760.0,827.0 757.0,829.0 754.0,826.0 752.0,824.0 748.0,819.0 745.0,817.0 743.0,814.0 741.0,812.0 737.0,808.0 736.0,805.0 732.0,802.0 728.0,800.0 726.0,798.0 723.0,793.0 720.0,791.0 718.0,789.0 715.0,785.0 717.0,781.0 720.0,779.0 723.0,774.0 726.0,771.0 728.0,767.0 733.0,764.0 735.0,760.0 731.0,761.0 727.0,760.0 731.0,756.0 732.0,754.0 735.0,750.0 737.0,745.0 738.0,741.0 738.0,737.0 739.0,732.0 740.0,729.0 742.0,725.0 739.0,726.0 735.0,729.0 730.0,732.0 727.0,734.0 722.0,736.0 717.0,738.0 714.0,741.0 710.0,742.0 707.0,745.0 706.0,748.0 702.0,753.0 700.0,756.0 696.0,755.0 690.0,755.0 687.0,755.0 682.0,755.0 684.0,752.0 684.0,746.0 686.0,742.0 686.0,738.0 687.0,733.0 688.0,730.0 690.0,725.0 692.0,721.0 692.0,715.0 692.0,712.0 694.0,709.0 693.0,703.0 694.0,699.0 695.0,695.0 700.0,692.0 703.0,691.0 707.0,690.0 710.0,687.0 710.0,680.0 708.0,676.0 705.0,673.0 703.0,669.0 700.0,667.0 700.0,663.0 700.0,658.0 701.0,654.0 702.0,650.0 697.0,651.0 693.0,650.0 687.0,649.0" fill="#5c562f"/>
<polygon points="670,640 840,600 850,660 835,700 850,800 760,835 670,770" fill="#54472b"/>
<polygon points="735,700 800,668 835,700 845,790 790,800 757,829 715,785" fill="#5c4933"/>
<polygon points="670.0,585.8 1450.0,358.0 1450.0,406.0 670.0,613.7" fill="#66552f"/>
<polygon points="670.0,613.7 1450.0,406.0 1450.0,410.5 670.0,638.3" fill="#5a422e"/>
<polygon points="670.0,621.4 1450.0,409.2 1450.0,411.6 670.0,630.4" fill="#3f2c20"/>
<polygon points="670.0,634.1 1450.0,410.8 1450.0,410.5 670.0,638.3" fill="#4c382a"/>
<polygon points="670.0,638.3 1450.0,410.5 1450.0,422.0 670.0,649.8" fill="#544f50"/>
<polygon points="670.0,638.3 1450.0,410.5 1450.0,422.0 670.0,649.8" fill="url(#spd)"/>
<polygon points="670.0,649.8 1450.0,422.0 1450.0,425.8 670.0,653.6" fill="#88837f"/>
<polygon points="670.0,653.6 1450.0,425.8 1450.0,445.2 670.0,676.3" fill="#84664a"/>
<polygon points="670.0,656.8 1450.0,429.0 1450.0,438.1 670.0,668.1" fill="#907257"/>
<polygon points="670.0,676.3 1450.0,445.2 1450.0,450.1 670.0,680.1" fill="#5e5230"/>
<polygon points="670.0,678.8 1450.0,451.0 1450.0,452.3 670.0,685.6" fill="#37311c"/>
<ellipse cx="975" cy="573" rx="17" ry="6" transform="rotate(-17 975 573)" fill="#c8a27c"/>
<polygon points="1290,462 1350,462 1400,495 1440,530 1420,540 1380,520 1340,500 1300,492 1285,478" fill="#665836"/>
<polygon points="1296,470 1347,463 1372,484 1385,500 1360,498 1335,490 1312,494 1298,486" fill="#7b6048"/>
<polygon points="1300,490 1340,496 1385,514 1425,545 1400,560 1370,535 1330,515 1298,505" fill="#615a2e"/>
<path d="M1296 492 q30 8 50 25 q30 10 60 20" stroke="#3c3820" stroke-width="2" fill="none"/>
<polygon points="678,648 740,584 744,586 686,650" fill="#9ea3a3"/>
<polygon points="850,672 900,640 960,612 1020,592 1042,594 1062,640 1078,664 1100,668 1160,650 1192,645 1204,700 1130,704 1096,733 1010,749 995,767 945,747 920,772 895,792 870,788 858,760 840,720 828,690" fill="#74665a"/>
<ellipse cx="983" cy="680" rx="27" ry="25" fill="#5d5b30"/>
<polygon points="855,700 880,690 905,700 900,722 870,728 856,720" fill="#54552c"/>
<polygon points="880,750 915,738 935,752 920,772 895,792 878,780" fill="#4a4d2a"/>
<polygon points="1040,596 1060,590 1080,640 1090,660 1078,664 1062,640" fill="#5a5a2e"/>
<polygon points="990,735 1010,700 1015,745 995,765" fill="#5a5a2e"/>
<polygon points="830,668 900,690 960,660 1000,640 1010,650 960,675 905,700 850,690" fill="#5d5550"/>
<polygon points="880,628 900,618 975,596 985,600 975,636 940,662 895,670 882,660" fill="#5b582e"/>
<ellipse cx="911" cy="649" rx="20" ry="14" transform="rotate(-12 911 649)" fill="#7a7778"/>
<ellipse cx="952" cy="634" rx="18" ry="13" transform="rotate(-12 952 634)" fill="#757273"/>
<path d="M893 652 l36 -10 M936 638 l32 -9" stroke="#3c3a44" stroke-width="1.5"/>
<ellipse cx="911" cy="649" rx="20" ry="14" transform="rotate(-12 911 649)" fill="url(#sp2)"/>
<ellipse cx="952" cy="634" rx="18" ry="13" transform="rotate(-12 952 634)" fill="url(#sp2)"/>
<path d="M893 640 q-6 10 0 20" stroke="#2a2a1c" stroke-width="4" fill="none"/>
<path d="M936 625 q-5 8 -1 14" stroke="#2a2a1c" stroke-width="3" fill="none"/>
<polygon points="985,622 1005,617 1008,628 988,634" fill="#5a5458"/>
<polygon points="1022,596 1038,590 1062,640 1085,668 1070,676 1050,650 1035,625" fill="#8d8384"/>
<polygon points="1024,600 1036,596 1046,616 1034,622" fill="#a7a0a3"/>
<polygon points="1034,625 1052,620 1060,636 1042,642" fill="#6a6064"/>
<polygon points="1046,650 1068,644 1072,655 1052,662" fill="#5c5658"/>
<polygon points="1026,634 1034,632 1038,644 1030,646" fill="#b7aa96"/>
<polygon points="1008,660 1016,657 1024,676 1017,679" fill="#b9ad9a"/>
<polygon points="1000,650 1012,644 1016,650 1004,656" fill="#4a4644"/>
<polygon points="1104,672 1115,668 1123,694 1112,698" fill="#6d5d52"/>
<polygon points="1118,668 1129,664 1137,690 1126,694" fill="#6d5d52"/>
<polygon points="1132,663 1143,659 1151,685 1140,689" fill="#6d5d52"/>
<polygon points="1146,659 1157,655 1165,681 1154,685" fill="#6d5d52"/>
<polygon points="1160,654 1171,650 1179,676 1168,680" fill="#6d5d52"/>
<polygon points="1174,650 1185,646 1193,672 1182,676" fill="#6d5d52"/>
<polygon points="1188,662 1196,660 1206,694 1198,698" fill="#6d5d52"/>
<polygon points="1012,712 1021,708 1039,746 1031,750" fill="#6b676a"/>
<polygon points="1012,712 1021,708 1039,746 1031,750" fill="url(#sp2)"/>
<polygon points="1026,703 1035,699 1053,737 1045,741" fill="#6b676a"/>
<polygon points="1026,703 1035,699 1053,737 1045,741" fill="url(#sp2)"/>
<polygon points="1040,697 1049,693 1067,731 1059,735" fill="#6b676a"/>
<polygon points="1040,697 1049,693 1067,731 1059,735" fill="url(#sp2)"/>
<polygon points="1056,693 1065,689 1083,727 1075,731" fill="#6b676a"/>
<polygon points="1056,693 1065,689 1083,727 1075,731" fill="url(#sp2)"/>
<polygon points="1072,692 1081,688 1099,726 1091,730" fill="#6b676a"/>
<polygon points="1072,692 1081,688 1099,726 1091,730" fill="url(#sp2)"/>
<path d="M1030 696 l14 30 M1058 690 l16 34" stroke="#4f7a45" stroke-width="1.2"/>
<polygon points="1006,728 1014,712 1020,745 1010,752" fill="#55502c"/>
<polygon points="1090,700 1102,696 1112,716 1098,730" fill="#56482f"/>
<rect x="976" y="733" width="5" height="9" fill="#d08a1c"/>
<polygon points="992,752 1002,749 1003,754 993,757" fill="#3f66b0"/>
<polygon points="910,732 958,720 960,724 912,737" fill="#585050"/>
<polygon points="912,726 920,724 924,742 950,735 952,740 920,748" fill="#4c4648"/>
<polygon points="862,724 910,730 908,736 860,730" fill="#6a6264"/>
<ellipse cx="1118" cy="611" rx="50.500" ry="38.500" fill="#45452a"/>
<ellipse cx="1118" cy="611" rx="49.500" ry="37.500" fill="#7f7568"/>
<ellipse cx="1118.500" cy="611.500" rx="44.500" ry="33.500" fill="#97867a"/>
<path d="M1118 612 L1080 630 A44.500 33.500 0 0 0 1146 638 Z" fill="#8c7b70"/>
<path d="M1152 590 A44.500 33.500 0 0 1 1138 642 Q1158 622 1146 596 Z" fill="#4d474b"/>
<path d="M1100 612 L1146 588" stroke="#5f585c" stroke-width="5" opacity=".8"/>
<path d="M1098 608 L1130 592" stroke="#4c464c" stroke-width="2"/>
<polygon points="1171,545 1178,543 1200,585 1218,625 1256,700 1246,702 1208,640 1192,604" fill="#7f7668"/>
<polygon points="1173,554 1224,532 1290,505 1296,504 1312,532 1305,535 1290,511 1228,536 1176,559" fill="#7f7668"/>
<path d="M1212 637 L1310 596" stroke="#7c775c" stroke-width="1.500"/>
<path d="M1150 650 L1200 634" stroke="#8b8273" stroke-width="4"/>
<polygon points="1143,549 1156,545 1166,566 1153,570" fill="#6b5a4c"/>
<polygon points="1150,552 1155,550 1160,566 1156,568" fill="#2d2a2e"/>
<ellipse cx="1240.500" cy="572.500" rx="50.500" ry="38.500" fill="#716a5c"/>
<ellipse cx="1241" cy="573" rx="47.500" ry="35.500" fill="#1c1a18"/>
<ellipse cx="1346" cy="566" rx="50" ry="38.500" fill="#716a5c"/>
<ellipse cx="1346" cy="566.500" rx="47" ry="35.500" fill="#1c1a18"/>
<ellipse cx="1290" cy="652" rx="54" ry="40" fill="#716a5c"/>
<ellipse cx="1290.500" cy="652.500" rx="51.500" ry="37.500" fill="#1c1a18"/>
<polygon points="774,771 831,754 835,760 833,800 789,800" fill="#2b2930"/>
<polygon points="780,775 829,760 837,778 832,799 792,799" fill="#b9abb3"/>
<polygon points="822,764 829,760 837,778 832,799 826,799" fill="#a398a6"/>
<polygon points="793,780 822,772 828,786 800,794" fill="#9c9295"/>
<polygon points="726,771 715,785 757,829 789,805 785,798" fill="#8c8c8c"/>
<polygon points="726,771 715,785 757,829 789,805 785,798" fill="url(#sp1)"/>
<path d="M806 645 L822 690 L860 780" stroke="#3e3a22" stroke-width="3" fill="none"/>
<path d="M825 700 L842 745" stroke="#2e2a1c" stroke-width="4" fill="none"/>
<polygon points="880,752 905,742 925,758 930,772 910,775 897,806 890,790 878,782" fill="#3f4426"/>
<polygon points="905,770 912,740 916,742 912,772" fill="#1e2418"/>
<polygon points="1380,492 1396,500 1430,522 1424,528 1400,510 1378,498" fill="#8f8270"/>
<rect x="660" y="430" width="800" height="420" filter="url(#tx2)"/>
<rect x="660" y="430" width="800" height="420" filter="url(#tx)" opacity=".4"/>
</g>
<polygon points="849,660 877,658 879,672 866,677 851,675" fill="#fff"/>
<ellipse cx="862" cy="655" rx="14.5" ry="10.5" fill="#b3a39d"/>
<ellipse cx="859" cy="652" rx="9" ry="6" fill="#c3b5b0"/>
<path d="M849 660 q13 10 28 0" stroke="#4a403c" stroke-width="1" fill="none"/>
<polygon points="826,652 835,644 852,642 850,650 846,664 830,666 826,660" fill="#fff"/>
<polygon points="838,644 870,634 897,626 898,632 872,640 848,648" fill="#fff"/>
<polygon points="910,622 915,614 935,610 947,606 950,612 930,618 915,624" fill="#fff"/>
<polygon points="952,602 960,598 966,600 958,606" fill="#fff"/>
<polygon points="900,690 915,684 935,688 942,700 940,718 925,722 915,710 903,712 898,700" fill="#fff"/>
<polygon points="885,690 905,684 905,692 890,700" fill="#fff"/>
<polygon points="928,668 935,660 938,672 950,680 932,676" fill="#fff"/>
<polygon points="855,748 870,742 880,748 876,760 860,762" fill="#fff"/>
<polygon points="895,740 905,736 912,744 903,752" fill="#fff"/>
<ellipse cx="972" cy="602" rx="6" ry="5" fill="#ddd6d2"/><ellipse cx="981" cy="598" rx="5" ry="4" fill="#cfc6c2"/><ellipse cx="977" cy="611" rx="8" ry="6" fill="#e4ddd8"/><ellipse cx="985" cy="607" rx="4" ry="4" fill="#d6cdc8"/>
<polygon points="953,608 966,605 966,609 955,612" fill="#fff"/>
<polygon points="987,628 1007,622 1008,626 989,632" fill="#fff"/>
<polygon points="971,630 990,640 1010,633 1010,637 990,645 972,636" fill="#fff"/>
<polygon points="1040,640 1064,634 1066,640 1044,647" fill="#fff"/>
<polygon points="1032,628 1036,626 1042,640 1038,642" fill="#fff"/>
<polygon points="1055,668 1078,660 1080,666 1058,674" fill="#fff"/>
<polygon points="1107,675 1113,673 1116,682 1110,684" fill="#fff"/>
<polygon points="1111,686 1117,684 1120,692 1114,694" fill="#fff"/>
<polygon points="1121,671 1127,669 1130,678 1124,680" fill="#fff"/>
<polygon points="1125,682 1131,680 1134,688 1128,690" fill="#fff"/>
<polygon points="1135,666 1141,664 1144,673 1138,675" fill="#fff"/>
<polygon points="1139,677 1145,675 1148,683 1142,685" fill="#fff"/>
<polygon points="1149,662 1155,660 1158,669 1152,671" fill="#fff"/>
<polygon points="1153,673 1159,671 1162,679 1156,681" fill="#fff"/>
<polygon points="1163,657 1169,655 1172,664 1166,666" fill="#fff"/>
<polygon points="1167,668 1173,666 1176,674 1170,676" fill="#fff"/>
<polygon points="1177,653 1183,651 1186,660 1180,662" fill="#fff"/>
<polygon points="1181,664 1187,662 1190,670 1184,672" fill="#fff"/>
<polygon points="1192,672 1197,670 1201,684 1196,686" fill="#fff"/>
<polygon points="1022,708 1025,707 1042,744 1039,746" fill="#fff"/>
<polygon points="1036,699 1039,698 1056,735 1053,737" fill="#fff"/>
<polygon points="1050,693 1053,692 1070,729 1067,731" fill="#fff"/>
<polygon points="1066,689 1069,688 1086,725 1083,727" fill="#fff"/>
<polygon points="1082,688 1085,687 1102,724 1099,726" fill="#fff"/>
<polygon points="1095,690 1104,688 1106,694 1097,696" fill="#fff"/>
<polygon points="917,730 940,724 943,733 921,739" fill="#fff"/>
<path d="M1075.500 603 A44 33 0 0 1 1144 584" stroke="#fff" stroke-width="2" fill="none"/>
<polygon points="1114,619 1119,613 1127,607 1150,589 1154,592 1140,603 1130,612 1122,621 1116,622" fill="#fff"/>
<ellipse cx="1113" cy="620" rx="9" ry="4" fill="#4a4244" transform="rotate(25 1113 620)"/>
<polygon points="1114,619 1120,613 1124,616 1118,622" fill="#fff"/>
<path d="M1138 628 l8 -4 M1142 636 l6 -5" stroke="#fff" stroke-width="1.500"/>
<path d="M1100 650 l12 2 M1152 640 l10 -8" stroke="#fff" stroke-width="1"/>
<path d="M1178 556 L1206 600 L1218 628" stroke="#fff" stroke-width="1.500" fill="none"/>
<polygon points="1258,516 1282,508 1295,512 1300,530 1290,534 1284,520 1270,524" fill="#fff"/>
<polygon points="1230,528 1260,518 1262,521 1232,531" fill="#fff"/>
<path d="M1196 560 L1228 545" stroke="#fff" stroke-width="1.500"/>
<path d="M1080 652 q20 6 60 -4" stroke="#fff" stroke-width="1" fill="none"/>
<polygon points="1143,552 1147,550 1152,566 1148,566" fill="#fff"/>
<ellipse cx="1242" cy="573.800" rx="46" ry="34" fill="#fff"/>
<ellipse cx="1346.800" cy="567.300" rx="45.500" ry="34" fill="#fff"/>
<polygon points="1338,562 1346,559 1348,564 1342,568 1338,566" fill="#3a3634"/>
<ellipse cx="1292" cy="653.800" rx="50" ry="36" fill="#fff"/>
<polygon points="1273,649 1284,647 1290,645 1292,650 1284,653 1274,652" fill="#4a3a30"/>
<polygon points="1300,640 1336,646 1352,700 1270,700" fill="#fff"/>
<path d="M780 774 L793 798" stroke="#fff" stroke-width="1"/>
<polygon points="790,680 794,688 784,700 772,708 760,720 755,726 750,736 747,746 736,748 742,725 750,716 760,708 770,701 779,695 785,688" fill="#fff"/>
<polygon points="728,758 735,750 740,752 733,762" fill="#fff"/>
<path d="M701 671 L748 654" stroke="#fff" stroke-width="1"/>
<polygon points="718,650 726,646 730,652 722,656" fill="#fff"/>
<polygon points="900,752 912,748 918,760 905,764" fill="#fff"/>
<polygon points="928,581 936,579 938,585 942,590 936,588 930,586" fill="#fff"/>
<polygon points="1113,532 1120,530 1122,536 1126,541 1119,538" fill="#fff"/>
<polygon points="1237,487 1248,483 1250,486 1240,490" fill="#fff"/>
<polygon points="1035,657 1042,655 1043,660 1037,662" fill="#fff"/>
<polygon points="783,568 792,566 795,570 786,572" fill="#fff"/>
<polygon points="1338,504 1343,501 1350,504 1356,506 1350,509 1340,508" fill="#fff"/>
<polygon points="1395,528 1404,526 1408,538 1398,540" fill="#fff"/>
<polygon points="1396,506 1416,520 1412,524 1394,512" fill="#fff"/>
<g clip-path="url(#csil)">
<rect x="660" y="430" width="800" height="420" fill="url(#sp1)"/>
<polygon points="690,680 800,660 840,700 830,790 720,790 682,755" fill="url(#sp2)" opacity=".8"/>
<polygon points="1060,590 1175,555 1230,640 1250,700 1200,700 1170,640 1080,670" fill="url(#sp2)" opacity=".7"/>
<ellipse cx="983" cy="680" rx="27" ry="25" fill="url(#sp2)"/>
<polygon points="670.0,638.3 1450.0,410.5 1450.0,425.0 670.0,652.8" fill="url(#sp1)"/>
</g>
</svg>
<!-- LAS Dataset floating toolbar -->
<div class="a" style="left:209px;top:109px;width:305px;height:44px;box-sizing:border-box;border:2px solid #8e8e8e;border-bottom-width:3px;background:#f0f0f0"></div>
<div class="a" style="left:211px;top:111px;width:301px;height:39px;box-sizing:border-box;border:1px solid #fafafa;background:linear-gradient(#f6f6f6 45%,#ececec)"></div>
<div class="a" style="left:212px;top:112px;width:299px;height:15px;background:#a0a0a0"></div>
<svg class="a" style="left:484px;top:115px" width="24" height="9" viewBox="0 0 24 9"><path d="M0.500 2.300h7.500l-3.750 4z" fill="#fff"/><path d="M15.200 0.800l6.800 7.400M22 0.800l-6.800 7.400" stroke="#fff" stroke-width="2.200"/></svg>
<div class="combo" style="left:213px;top:130px;width:178px;height:18px"></div>
<div class="cbtn" style="left:373px;top:132px;width:16px;height:14px"></div>
<svg class="a" style="left:377px;top:137px" width="8" height="4" viewBox="0 0 8 4"><path d="M0.500 0h7l-3.500 4z" fill="#000"/></svg>
<div class="sep" style="left:394px;top:132px;height:15px;background:#c4c4c4"></div>
<div class="hl" style="left:398px;top:128px;width:22px;height:22px"></div>
<svg class="a" style="left:422px;top:138px" width="6" height="3" viewBox="0 0 6 3"><path d="M0 0h6l-3 3z" fill="#000"/></svg>
<svg class="a" style="left:454px;top:138px" width="6" height="3" viewBox="0 0 6 3"><path d="M0 0h6l-3 3z" fill="#000"/></svg>
<svg class="a" style="left:502px;top:137px" width="6" height="3" viewBox="0 0 6 3"><path d="M0 0h6l-3 3z" fill="#000"/></svg>

<div id="tocclip" class="a" style="left:0;top:0;width:1903px;height:1136px">
<!-- Table of contents -->
<div class="a" style="left:0;top:99px;width:200px;height:20px;background:linear-gradient(90deg,#c3d2e4,#d5e0ed)"></div>
<svg class="a" style="left:171px;top:103px" width="26" height="11" viewBox="0 0 26 11"><path d="M2 1.500h5M3 1.500v5M6.500 1.500v5M0.800 6.500h7.400M4.500 6.500v4" stroke="#38424c" stroke-width="1.100" fill="none"/><path d="M5.500 1.500v5" stroke="#38424c" stroke-width="1.600"/><path d="M16.500 2l7 7M23.500 2l-7 7" stroke="#38424c" stroke-width="1.300"/></svg>
<div class="a" style="left:0;top:119px;width:200px;height:26px;background:linear-gradient(#fafafa,#f0f0f0)"></div>
<div class="hl" style="left:4px;top:121px;width:22px;height:22px"></div>
<div class="a" style="left:0;top:145px;width:199px;height:991px;box-sizing:border-box;border:1px solid #8a93a3;border-bottom:none;background:#fff"></div>
<!-- expand box + checkbox -->
<svg class="a" style="left:9px;top:171px" width="9" height="9" viewBox="0 0 9 9"><use href="#expm"/></svg>
<svg class="a" style="left:26px;top:169px" width="11" height="11" viewBox="0 0 11 11"><rect x=".5" y=".5" width="10" height="10" fill="#fff" stroke="#000" stroke-width="1" shape-rendering="crispEdges"/><path d="M2.300 5.300l2.300 2.800l4.200-5.600" fill="none" stroke="#000" stroke-width="1.700"/></svg>
<!-- h scrollbar -->
<div class="a" style="left:2px;top:1121px;width:195px;height:15px;background:linear-gradient(#f4f4f4,#e6e6e6)"></div>
<div class="a" style="left:20px;top:1121px;width:154px;height:16px;box-sizing:border-box;border:1px solid #979797;border-radius:2px;background:linear-gradient(#f4f4f4 0,#eaeaea 45%,#d4d4d4 55%,#c9c9c9 100%)"></div>
<svg class="a" style="left:7px;top:1124px" width="186" height="9" viewBox="0 0 186 9"><path d="M5 0.500v8l-4.500-4z M181 0.500v8l4.500-4z" fill="#333"/><path d="M86.500 1v7M89.500 1v7M92.500 1v7" stroke="#444" stroke-width="1"/><path d="M87.500 1v7M90.500 1v7M93.500 1v7" stroke="#fff" stroke-width="1" opacity=".8"/></svg>

</div>
<!-- ArcToolbox floating window -->
<div class="a" style="left:-2px;top:374px;width:292px;height:600px;box-sizing:border-box;border-right:1px solid #000;border-bottom:1px solid #000;background:#f4f4f4;box-shadow:inset -1px -1px 0 rgba(0,0,0,.45)"></div>
<div class="a" style="left:0;top:374px;width:289px;height:4px;background:linear-gradient(#fdfdfd,#efefef)"></div>
<div class="a" style="left:0;top:378px;width:287px;height:19px;background:linear-gradient(90deg,#c3d2e4,#d5e0ed)"></div>
<svg class="a" style="left:257px;top:382px" width="26" height="9" viewBox="0 0 26 9"><rect x="0.600" y="1" width="8" height="7.400" fill="none" stroke="#38454f" stroke-width="1.200"/><path d="M0 0.800h9.200" stroke="#38454f" stroke-width="1.600"/><path d="M17.300 1l7.400 7.400M24.700 1l-7.400 7.400" stroke="#38454f" stroke-width="1.300"/></svg>
<div class="a" style="left:-2px;top:399px;width:289px;height:572px;box-sizing:border-box;border:1px solid #8a93a3;background:#fff"></div>
<!-- v scrollbar -->
<div class="a" style="left:269px;top:401px;width:16px;height:568px;background:linear-gradient(90deg,#e4e4e4,#efefef 30%,#f1f1f1)"></div>
<div class="a" style="left:269px;top:449px;width:16px;height:309px;box-sizing:border-box;border:1px solid #979797;border-radius:2px;background:linear-gradient(90deg,#f5f5f5 0,#ebebeb 40%,#d2d2d5 55%,#c6c6ca 100%)"></div>
<svg class="a" style="left:272px;top:405px" width="10" height="560" viewBox="0 0 10 560"><path d="M1.500 6.500l3.800-4l3.800 4z" fill="#333"/><path d="M1.500 554l3.800 4l3.800-4z" fill="#333"/><path d="M1 195.500h7.500M1 198.500h7.500M1 201.500h7.500" stroke="#444"/><path d="M1 196.500h7.500M1 199.500h7.500M1 202.500h7.500" stroke="#fff" opacity=".8"/></svg>

<div class="a" style="left:0;top:400px;width:268px;height:570px;overflow:hidden"><div class="a" style="left:0;top:-400px">
<div class="a" style="left:74px;top:778.8px;width:103px;height:17px;background:#ececec"></div>
<svg class="a" style="left:2px;top:406.9px" width="9" height="9" viewBox="0 0 9 9"><use href="#expp"/></svg>
<svg class="a" style="left:17px;top:401.8px" width="16" height="16" viewBox="0 0 16 16"><use href="#tbx"/></svg>
<svg class="a" style="left:2px;top:424.9px" width="9" height="9" viewBox="0 0 9 9"><use href="#expp"/></svg>
<svg class="a" style="left:17px;top:419.8px" width="16" height="16" viewBox="0 0 16 16"><use href="#tbx"/></svg>
<svg class="a" style="left:2px;top:442.9px" width="9" height="9" viewBox="0 0 9 9"><use href="#expp"/></svg>
<svg class="a" style="left:17px;top:437.8px" width="16" height="16" viewBox="0 0 16 16"><use href="#tbx"/></svg>
<svg class="a" style="left:2px;top:460.9px" width="9" height="9" viewBox="0 0 9 9"><use href="#expm"/></svg>
<svg class="a" style="left:17px;top:455.8px" width="16" height="16" viewBox="0 0 16 16"><use href="#tbx"/></svg>
<svg class="a" style="left:21px;top:478.9px" width="9" height="9" viewBox="0 0 9 9"><use href="#expp"/></svg>
<svg class="a" style="left:36px;top:473.8px" width="16" height="16" viewBox="0 0 16 16"><use href="#tset"/></svg>
<svg class="a" style="left:21px;top:496.9px" width="9" height="9" viewBox="0 0 9 9"><use href="#expp"/></svg>
<svg class="a" style="left:36px;top:491.8px" width="16" height="16" viewBox="0 0 16 16"><use href="#tset"/></svg>
<svg class="a" style="left:21px;top:514.9px" width="9" height="9" viewBox="0 0 9 9"><use href="#expp"/></svg>
<svg class="a" style="left:36px;top:509.8px" width="16" height="16" viewBox="0 0 16 16"><use href="#tset"/></svg>
<svg class="a" style="left:21px;top:532.9px" width="9" height="9" viewBox="0 0 9 9"><use href="#expp"/></svg>
<svg class="a" style="left:36px;top:527.8px" width="16" height="16" viewBox="0 0 16 16"><use href="#tset"/></svg>
<svg class="a" style="left:21px;top:550.9px" width="9" height="9" viewBox="0 0 9 9"><use href="#expp"/></svg>
<svg class="a" style="left:36px;top:545.8px" width="16" height="16" viewBox="0 0 16 16"><use href="#tset"/></svg>
<svg class="a" style="left:21px;top:568.9px" width="9" height="9" viewBox="0 0 9 9"><use href="#expp"/></svg>
<svg class="a" style="left:36px;top:563.8px" width="16" height="16" viewBox="0 0 16 16"><use href="#tset"/></svg>
<svg class="a" style="left:21px;top:586.9px" width="9" height="9" viewBox="0 0 9 9"><use href="#expp"/></svg>
<svg class="a" style="left:36px;top:581.8px" width="16" height="16" viewBox="0 0 16 16"><use href="#tset"/></svg>
<svg class="a" style="left:21px;top:604.9px" width="9" height="9" viewBox="0 0 9 9"><use href="#expp"/></svg>
<svg class="a" style="left:36px;top:599.8px" width="16" height="16" viewBox="0 0 16 16"><use href="#tset"/></svg>
<svg class="a" style="left:21px;top:622.9px" width="9" height="9" viewBox="0 0 9 9"><use href="#expp"/></svg>
<svg class="a" style="left:36px;top:617.8px" width="16" height="16" viewBox="0 0 16 16"><use href="#tset"/></svg>
<svg class="a" style="left:21px;top:640.9px" width="9" height="9" viewBox="0 0 9 9"><use href="#expp"/></svg>
<svg class="a" style="left:36px;top:635.8px" width="16" height="16" viewBox="0 0 16 16"><use href="#tset"/></svg>
<svg class="a" style="left:21px;top:658.9px" width="9" height="9" viewBox="0 0 9 9"><use href="#expp"/></svg>
<svg class="a" style="left:36px;top:653.8px" width="16" height="16" viewBox="0 0 16 16"><use href="#tset"/></svg>
<svg class="a" style="left:21px;top:676.9px" width="9" height="9" viewBox="0 0 9 9"><use href="#expp"/></svg>
<svg class="a" style="left:36px;top:671.8px" width="16" height="16" viewBox="0 0 16 16"><use href="#tset"/></svg>
<svg class="a" style="left:21px;top:694.9px" width="9" height="9" viewBox="0 0 9 9"><use href="#expp"/></svg>
<svg class="a" style="left:36px;top:689.8px" width="16" height="16" viewBox="0 0 16 16"><use href="#tset"/></svg>
<svg class="a" style="left:21px;top:712.9px" width="9" height="9" viewBox="0 0 9 9"><use href="#expp"/></svg>
<svg class="a" style="left:36px;top:707.8px" width="16" height="16" viewBox="0 0 16 16"><use href="#tset"/></svg>
<svg class="a" style="left:21px;top:730.9px" width="9" height="9" viewBox="0 0 9 9"><use href="#expp"/></svg>
<svg class="a" style="left:36px;top:725.8px" width="16" height="16" viewBox="0 0 16 16"><use href="#tset"/></svg>
<svg class="a" style="left:21px;top:748.9px" width="9" height="9" viewBox="0 0 9 9"><use href="#expm"/></svg>
<svg class="a" style="left:36px;top:743.8px" width="16" height="16" viewBox="0 0 16 16"><use href="#tset"/></svg>
<svg class="a" style="left:55px;top:761.8px" width="16" height="16" viewBox="0 0 16 16"><use href="#ham"/></svg>
<svg class="a" style="left:55px;top:779.8px" width="16" height="16" viewBox="0 0 16 16"><use href="#ham"/></svg>
<svg class="a" style="left:55px;top:797.8px" width="16" height="16" viewBox="0 0 16 16"><use href="#ham"/></svg>
<svg class="a" style="left:55px;top:815.8px" width="16" height="16" viewBox="0 0 16 16"><use href="#ham"/></svg>
<svg class="a" style="left:55px;top:833.8px" width="16" height="16" viewBox="0 0 16 16"><use href="#ham"/></svg>
<svg class="a" style="left:21px;top:856.9px" width="9" height="9" viewBox="0 0 9 9"><use href="#expp"/></svg>
<svg class="a" style="left:36px;top:851.8px" width="16" height="16" viewBox="0 0 16 16"><use href="#tset"/></svg>
<svg class="a" style="left:21px;top:874.9px" width="9" height="9" viewBox="0 0 9 9"><use href="#expp"/></svg>
<svg class="a" style="left:36px;top:869.8px" width="16" height="16" viewBox="0 0 16 16"><use href="#tset"/></svg>
<svg class="a" style="left:21px;top:892.9px" width="9" height="9" viewBox="0 0 9 9"><use href="#expp"/></svg>
<svg class="a" style="left:36px;top:887.8px" width="16" height="16" viewBox="0 0 16 16"><use href="#tset"/></svg>
<svg class="a" style="left:21px;top:910.9px" width="9" height="9" viewBox="0 0 9 9"><use href="#expp"/></svg>
<svg class="a" style="left:36px;top:905.8px" width="16" height="16" viewBox="0 0 16 16"><use href="#tset"/></svg>
<svg class="a" style="left:21px;top:928.9px" width="9" height="9" viewBox="0 0 9 9"><use href="#expp"/></svg>
<svg class="a" style="left:36px;top:923.8px" width="16" height="16" viewBox="0 0 16 16"><use href="#tset"/></svg>
<svg class="a" style="left:21px;top:946.9px" width="9" height="9" viewBox="0 0 9 9"><use href="#expp"/></svg>
<svg class="a" style="left:36px;top:941.8px" width="16" height="16" viewBox="0 0 16 16"><use href="#tset"/></svg>
<svg class="a" style="left:21px;top:964.9px" width="9" height="9" viewBox="0 0 9 9"><use href="#expp"/></svg>
<svg class="a" style="left:36px;top:959.8px" width="16" height="16" viewBox="0 0 16 16"><use href="#tset"/></svg>
<span class="t" style="left:37.7px;top:402.1px;font-size:12px;line-height:16px;letter-spacing:0.083px;color:#000;font-weight:400">Cartography Tools</span>
<span class="t" style="left:37.7px;top:420.1px;font-size:12px;line-height:16px;letter-spacing:0.045px;color:#000;font-weight:400">Conversion Tools</span>
<span class="t" style="left:37.7px;top:438.1px;font-size:12px;line-height:16px;letter-spacing:0.037px;color:#000;font-weight:400">Data Interoperability Tools</span>
<span class="t" style="left:37.7px;top:456.1px;font-size:12px;line-height:16px;letter-spacing:0.032px;color:#000;font-weight:400">Data Management Tools</span>
<span class="t" style="left:56.4px;top:474.1px;font-size:12px;line-height:16px;letter-spacing:0.210px;color:#000;font-weight:400">Attachments</span>
<span class="t" style="left:56.4px;top:492.1px;font-size:12px;line-height:16px;letter-spacing:-0.041px;color:#000;font-weight:400">Data Comparison</span>
<span class="t" style="left:56.4px;top:510.1px;font-size:12px;line-height:16px;letter-spacing:-0.134px;color:#000;font-weight:400">Distributed Geodatabase</span>
<span class="t" style="left:56.4px;top:528.1px;font-size:12px;line-height:16px;letter-spacing:0.073px;color:#000;font-weight:400">Domains</span>
<span class="t" style="left:56.4px;top:546.1px;font-size:12px;line-height:16px;letter-spacing:-0.409px;color:#000;font-weight:400">Feature Class</span>
<span class="t" style="left:56.4px;top:564.1px;font-size:12px;line-height:16px;letter-spacing:-0.366px;color:#000;font-weight:400">Features</span>
<span class="t" style="left:56.4px;top:582.1px;font-size:12px;line-height:16px;letter-spacing:-0.243px;color:#000;font-weight:400">Fields</span>
<span class="t" style="left:56.4px;top:600.1px;font-size:12px;line-height:16px;letter-spacing:-0.329px;color:#000;font-weight:400">File Geodatabase</span>
<span class="t" style="left:56.4px;top:618.1px;font-size:12px;line-height:16px;letter-spacing:-0.317px;color:#000;font-weight:400">General</span>
<span class="t" style="left:56.4px;top:636.1px;font-size:12px;line-height:16px;letter-spacing:-0.122px;color:#000;font-weight:400">Generalization</span>
<span class="t" style="left:56.4px;top:654.1px;font-size:12px;line-height:16px;letter-spacing:0.001px;color:#000;font-weight:400">Geodatabase Administration</span>
<span class="t" style="left:56.4px;top:672.1px;font-size:12px;line-height:16px;letter-spacing:0.069px;color:#000;font-weight:400">Geometric Network</span>
<span class="t" style="left:56.4px;top:690.1px;font-size:12px;line-height:16px;letter-spacing:-0.265px;color:#000;font-weight:400">Graph</span>
<span class="t" style="left:56.4px;top:708.1px;font-size:12px;line-height:16px;letter-spacing:-0.372px;color:#000;font-weight:400">Indexes</span>
<span class="t" style="left:56.4px;top:726.1px;font-size:12px;line-height:16px;letter-spacing:-0.304px;color:#000;font-weight:400">Joins</span>
<span class="t" style="left:56.4px;top:744.1px;font-size:12px;line-height:16px;letter-spacing:-0.458px;color:#000;font-weight:400">LAS Dataset</span>
<span class="t" style="left:75.4px;top:762.1px;font-size:12px;line-height:16px;letter-spacing:-0.273px;color:#000;font-weight:400">Add Files to LAS Dataset</span>
<span class="t" style="left:75.4px;top:780.1px;font-size:12px;line-height:16px;letter-spacing:-0.408px;color:#000;font-weight:400">Create LAS Dataset</span>
<span class="t" style="left:75.4px;top:798.1px;font-size:12px;line-height:16px;letter-spacing:-0.329px;color:#000;font-weight:400">LAS Dataset Statistics</span>
<span class="t" style="left:75.4px;top:816.1px;font-size:12px;line-height:16px;letter-spacing:-0.314px;color:#000;font-weight:400">LAS Point Statistics as Raster</span>
<span class="t" style="left:75.4px;top:834.1px;font-size:12px;line-height:16px;letter-spacing:-0.254px;color:#000;font-weight:400">Remove Files from LAS Dataset</span>
<span class="t" style="left:56.4px;top:852.1px;font-size:12px;line-height:16px;letter-spacing:-0.215px;color:#000;font-weight:400">Layers and Table Views</span>
<span class="t" style="left:56.4px;top:870.1px;font-size:12px;line-height:16px;letter-spacing:-0.317px;color:#000;font-weight:400">Package</span>
<span class="t" style="left:56.4px;top:888.1px;font-size:12px;line-height:16px;letter-spacing:0.088px;color:#000;font-weight:400">Photos</span>
<span class="t" style="left:56.4px;top:906.1px;font-size:12px;line-height:16px;letter-spacing:0.024px;color:#000;font-weight:400">Projections and Transformations</span>
<span class="t" style="left:56.4px;top:924.1px;font-size:12px;line-height:16px;letter-spacing:-0.509px;color:#000;font-weight:400">Raster</span>
<span class="t" style="left:56.4px;top:942.1px;font-size:12px;line-height:16px;letter-spacing:-0.277px;color:#000;font-weight:400">Relationship Classes</span>
<span class="t" style="left:56.4px;top:960.1px;font-size:12px;line-height:16px;letter-spacing:-0.250px;color:#000;font-weight:400">Subtypes</span>
</div></div>
<span class="t" style="left:20.2px;top:3.1px;font-size:12px;line-height:16px;letter-spacing:0.071px;color:#000;font-weight:400">Untitled - ArcScene</span>
<span class="t" style="left:17.7px;top:27.1px;font-size:12px;line-height:16px;letter-spacing:-0.281px;color:#000;font-weight:400">File</span>
<span class="t" style="left:51.2px;top:27.1px;font-size:12px;line-height:16px;letter-spacing:-0.029px;color:#000;font-weight:400">Edit</span>
<span class="t" style="left:87.2px;top:27.1px;font-size:12px;line-height:16px;letter-spacing:0.068px;color:#000;font-weight:400">View</span>
<span class="t" style="left:128.7px;top:27.1px;font-size:12px;line-height:16px;letter-spacing:-0.104px;color:#000;font-weight:400">Bookmarks</span>
<span class="t" style="left:203.2px;top:27.1px;font-size:12px;line-height:16px;letter-spacing:-0.097px;color:#000;font-weight:400">Selection</span>
<span class="t" style="left:267.6px;top:27.1px;font-size:12px;line-height:16px;letter-spacing:-0.193px;color:#000;font-weight:400">Geoprocessing</span>
<span class="t" style="left:361.8px;top:27.1px;font-size:12px;line-height:16px;letter-spacing:-0.036px;color:#000;font-weight:400">Customize</span>
<span class="t" style="left:433.2px;top:27.1px;font-size:12px;line-height:16px;letter-spacing:0.219px;color:#000;font-weight:400">Windows</span>
<span class="t" style="left:498.7px;top:27.1px;font-size:12px;line-height:16px;letter-spacing:0.171px;color:#000;font-weight:400">Help</span>
<span class="t" style="left:31.7px;top:79.1px;font-size:12px;line-height:16px;letter-spacing:-0.016px;color:#000;font-weight:400">pointcloud_cluster_0_filter</span>
<span class="t" style="left:3.7px;top:102.1px;font-size:12px;line-height:16px;letter-spacing:0.037px;color:#4a4a4a;font-weight:400">Table of Contents</span>
<span class="t" style="left:25.2px;top:148.1px;font-size:12px;line-height:16px;letter-spacing:-0.398px;color:#000;font-weight:400">Scene layers</span>
<span class="t" style="left:44.7px;top:166.1px;font-size:12px;line-height:16px;letter-spacing:-0.090px;color:#000;font-weight:400">pointcloud_cluster_0_filtere1:</span>
<span class="t" style="left:213.7px;top:112.1px;font-size:12px;line-height:16px;letter-spacing:-0.527px;color:#fff;font-weight:400">LAS Dataset</span>
<span class="t" style="left:234.5px;top:132.1px;font-size:12px;line-height:16px;letter-spacing:-0.028px;color:#000;font-weight:400">pointcloud_cluster_0_filter</span>
<span class="t" style="left:468.7px;top:131.1px;font-size:12px;line-height:16px;letter-spacing:-0.245px;color:#000;font-weight:400">Filters</span>
<span class="t" style="left:-2.8px;top:380.1px;font-size:12px;line-height:16px;letter-spacing:0.181px;color:#4a4a4a;font-weight:400">ArcToolbox</span>
<!-- ===== title icon ===== -->
<svg class="a" style="left:0;top:2px" width="17" height="18" viewBox="0 0 17 18">
<defs><clipPath id="tic"><circle cx="8.200" cy="8.700" r="7.800"/></clipPath>
<linearGradient id="tig" x1="0" y1="0" x2="0" y2="1"><stop offset="0" stop-color="#1d5fa8"/><stop offset=".45" stop-color="#4aa0e0"/><stop offset=".6" stop-color="#2f9a3a"/><stop offset="1" stop-color="#0f6a1f"/></linearGradient></defs>
<circle cx="8.200" cy="8.700" r="7.800" fill="url(#tig)" stroke="#1c5a66" stroke-width=".6"/>
<g clip-path="url(#tic)"><path d="M3 8l3-4 3 4z" fill="#9ecbee" opacity=".8"/><rect x="0" y="10.500" width="17" height="7" fill="#15802a"/><ellipse cx="3" cy="9.700" rx="2" ry="1.500" fill="#d9c83a"/>
<rect x="6.800" y="3.300" width="3" height="8.200" rx="1.400" fill="#f0d32a"/><rect x="10.800" y="6" width="3" height="6" rx="1.400" fill="#f5da20"/>
<path d="M7.500 5.500h1.600M7.500 7.500h1.600M7.500 9.500h1.600M11.500 7.700h1.600M11.500 9.700h1.600" stroke="#a8901c" stroke-width=".8"/>
<path d="M4.500 13.500h6.500" stroke="#222" stroke-width=".9" stroke-dasharray="1 .6"/></g>
</svg>

<!-- ===== standard toolbar ===== -->
<!-- new -->
<svg class="a" style="left:14px;top:51px" width="16" height="17" viewBox="0 0 16 17">
<defs><linearGradient id="gnew" x1="0" y1="0" x2="1" y2="1"><stop offset="0" stop-color="#dcebfa"/><stop offset="1" stop-color="#fff"/></linearGradient></defs>
<path d="M1.500 1.500h8l4 4v10h-12z" fill="url(#gnew)" stroke="#4d4d4d"/><path d="M9.500 1.500v4h4" fill="#fff" stroke="#4d4d4d"/></svg>
<!-- open -->
<svg class="a" style="left:34px;top:52px" width="18" height="17" viewBox="0 0 18 17">
<defs><linearGradient id="gfold" x1="0" y1="0" x2="0" y2="1"><stop offset="0" stop-color="#f5e7a2"/><stop offset="1" stop-color="#d7b54a"/></linearGradient></defs>
<path d="M1.500 14.500v-9.500h4l1.500 1.500h6.500v3" fill="#d9bb55" stroke="#6b5310"/>
<path d="M1.500 15.500l2.500-7h13l-3 7z" fill="url(#gfold)" stroke="#6b5310"/>
<path d="M9 5.500q1.500-3 5-3v-1.500l2.800 2.700-2.800 2.700v-1.600q-2.500-.2-3.600 1.500z" fill="#2b6fc0" stroke="#1b4a8a" stroke-width=".5"/></svg>
<!-- save -->
<svg class="a" style="left:57px;top:52px" width="16" height="16" viewBox="0 0 16 16">
<path d="M1.500 1.500h13v13h-11.500l-1.500-1.500z" fill="#bb9a40" stroke="#5b4512"/>
<rect x="4.500" y="1.500" width="7" height="4.500" fill="#fff" stroke="#7a6424" stroke-width=".6"/>
<rect x="4.500" y="9" width="7.500" height="5.500" fill="#3b3b3b"/><rect x="9" y="10" width="2" height="3.800" fill="#f4f4f4"/>
<path d="M2.500 2.500v10" stroke="#dcc274" stroke-width=".8"/></svg>
<!-- print -->
<svg class="a" style="left:78px;top:51px" width="18" height="17" viewBox="0 0 18 17">
<defs><linearGradient id="gprn" x1="0" y1="0" x2="0" y2="1"><stop offset="0" stop-color="#f3f0df"/><stop offset=".55" stop-color="#cfcbb0"/><stop offset="1" stop-color="#4b4732"/></linearGradient></defs>
<path d="M5.500 7v-5.500h5l2 2v3.500" fill="#eaf2fb" stroke="#4d4d4d"/><path d="M10.500 1.500v2h2" fill="none" stroke="#4d4d4d" stroke-width=".8"/>
<path d="M1.500 13.500v-5q0-1.500 1.500-1.500h12q1.500 0 1.500 1.500v5z" fill="url(#gprn)" stroke="#3d3a2a"/>
<rect x="4.500" y="10.500" width="9" height="5.500" fill="#fff" stroke="#4d4d4d"/><path d="M6 13.500h6" stroke="#3f8ad8" stroke-width="1.200"/><rect x="13" y="8.500" width="1.500" height="1" fill="#3ec43e"/></svg>
<!-- cut (disabled) -->
<svg class="a" style="left:107px;top:51px" width="16" height="18" viewBox="0 0 16 18" fill="none" stroke="#b4b4b4">
<path d="M8 1.500v9M9.500 1.500v9" stroke-width="1"/><path d="M1.500 4l8 8.500M2.800 3.200l8 8.500"/><circle cx="6.500" cy="14.500" r="2.200" stroke-width="1.300"/><circle cx="12.500" cy="11.500" r="2.200" stroke-width="1.300"/></svg>
<!-- copy (disabled) -->
<svg class="a" style="left:130px;top:51px" width="16" height="18" viewBox="0 0 16 18" fill="#ededed" stroke="#b4b4b4">
<path d="M4.500 1.500h7l3 3v8.500h-10z"/><path d="M1.500 5.500h6.500l2.500 2.500v8.500h-9z"/><path d="M3.500 9.500h5M3.500 11.500h5M3.500 13.500h5" stroke-width=".9"/></svg>
<!-- paste (disabled) -->
<svg class="a" style="left:151px;top:51px" width="16" height="18" viewBox="0 0 16 18" fill="#e2e2e2" stroke="#b4b4b4">
<path d="M1.500 3.500h11v11h-11z" fill="#d4d4d4"/><path d="M4 3.500q0-2 3-2t3 2v1.500h-6z" fill="#efefef"/><path d="M6.500 8.500h5.500l2.500 2.500v5.500h-8z" fill="#f3f3f3"/><path d="M8 12h4M8 14h5" stroke-width=".9"/></svg>
<!-- delete (disabled) -->
<svg class="a" style="left:175px;top:54px" width="12" height="12" viewBox="0 0 12 12"><path d="M1.800 1.800l8.400 8.400M10.200 1.800l-8.400 8.400" stroke="#ababab" stroke-width="2.300"/></svg>
<!-- undo / redo (disabled) -->
<svg class="a" style="left:202px;top:53px" width="14" height="13" viewBox="0 0 14 13"><path d="M1 1v5h5.500z" fill="#b8b8b8"/><path d="M3.500 5q6-4.500 8.500 0 1 3-3 6.500" fill="none" stroke="#b8b8b8" stroke-width="1.600"/></svg>
<svg class="a" style="left:224px;top:53px" width="14" height="13" viewBox="0 0 14 13"><path d="M13 1v5h-5.500z" fill="#b8b8b8"/><path d="M10.500 5q-6-4.500-8.500 0-1 3 3 6.500" fill="none" stroke="#b8b8b8" stroke-width="1.600"/></svg>
<!-- add data -->
<svg class="a" style="left:250px;top:51px" width="18" height="17" viewBox="0 0 18 17">
<defs><linearGradient id="gdia" x1="0" y1="0" x2="0" y2="1"><stop offset="0" stop-color="#fdf1d2"/><stop offset=".7" stop-color="#f4cf85"/><stop offset="1" stop-color="#eaa51c"/></linearGradient></defs>
<path d="M1 9l8-6 8 6-8 6.500z" fill="url(#gdia)" stroke="#c89232" stroke-width=".9"/>
<path d="M9 1v9.500M4 5.700h10" stroke="#000" stroke-width="2.100"/></svg>
<!-- scene window -->
<svg class="a" style="left:279px;top:52px" width="16" height="13" viewBox="0 0 16 13">
<rect x=".5" y=".5" width="15" height="12" fill="#f4f4f4" stroke="#3c3c3c"/><rect x="1" y="1" width="14" height="2.300" fill="#2a5fbe"/><rect x="13" y="1.300" width="1.300" height="1.300" fill="#fff"/>
<path d="M3 12q2-6 12-7.500v7.500z" fill="#8cc8f4"/><path d="M7 12q.5-4 3-5.500l5-1.800v7.300z" fill="#a9cf45"/><path d="M.5 11.500h15" stroke="#3c3c3c"/></svg>
<!-- TOC window -->
<svg class="a" style="left:307px;top:52px" width="16" height="13" viewBox="0 0 16 13">
<rect x=".5" y=".5" width="15" height="12" fill="#fff" stroke="#3c3c3c"/><rect x="1" y="1" width="14" height="2.300" fill="#2a5fbe"/><rect x="13" y="1.300" width="1.300" height="1.300" fill="#fff"/>
<path d="M2.500 4.700h1.800M5.500 4.700h8M2.500 8.700h1.800M5.500 8.700h8" stroke="#1f6fd0" stroke-width="1"/><path d="M9.500 6.700h4M9.500 10.700h4" stroke="#4a90e0" stroke-width="1"/>
<path d="M6.300 6.700h2" stroke="#e01818" stroke-width="1.100"/><path d="M6.300 10.700h2" stroke="#58b818" stroke-width="1.100"/></svg>
<!-- catalog window -->
<svg class="a" style="left:329px;top:52px" width="17" height="16" viewBox="0 0 17 16">
<rect x=".5" y=".5" width="15" height="12" fill="#f4f4f4" stroke="#3c3c3c"/><rect x="1" y="1" width="14" height="2.300" fill="#2a5fbe"/><rect x="13" y="1.300" width="1.300" height="1.300" fill="#fff"/>
<path d="M6 6l4-1.500 4 1v8l-4 1.500-4-1z" fill="#e6cc20" stroke="#8e7a10" stroke-width=".6"/><path d="M10 6.500v8.500" stroke="#8e7a10" stroke-width=".6"/><path d="M7 7.500l2 .5M11 8l2-.5" stroke="#3a3208" stroke-width="1"/>
<path d="M2 12l5-2.500 3 1.500v3l-4.500 1.500-3.500-1.200z" fill="#dcc222" stroke="#8e7a10" stroke-width=".6"/><circle cx="6" cy="11.300" r="1.800" fill="#2f6fc8"/><circle cx="6.500" cy="11" r=".9" fill="#58b040"/></svg>
<!-- search window -->
<svg class="a" style="left:351px;top:52px" width="17" height="17" viewBox="0 0 17 17">
<defs><radialGradient id="gglb" cx=".35" cy=".3" r=".8"><stop offset="0" stop-color="#bfe2ff"/><stop offset=".5" stop-color="#2f7fe0"/><stop offset="1" stop-color="#123f9a"/></radialGradient></defs>
<rect x=".5" y=".5" width="15" height="12" fill="#f4f4f4" stroke="#3c3c3c"/><rect x="1" y="1" width="14" height="2.300" fill="#2a5fbe"/><rect x="13" y="1.300" width="1.300" height="1.300" fill="#fff"/>
<rect x="2.500" y="4.500" width="11" height="2.500" fill="#cfe6fb" stroke="#7a7a7a" stroke-width=".8"/>
<circle cx="9" cy="12" r="4" fill="url(#gglb)"/><path d="M8 10.500q2-1 3.500.5.500 2-1 3-2 .5-2.500-1.500z" fill="#7fc83a" opacity=".9"/></svg>
<!-- toolbox window -->
<svg class="a" style="left:373px;top:52px" width="17" height="17" viewBox="0 0 17 17">
<rect x=".5" y=".5" width="15" height="12" fill="#f4f4f4" stroke="#3c3c3c"/><rect x="1" y="1" width="14" height="2.300" fill="#2a5fbe"/><rect x="13" y="1.300" width="1.300" height="1.300" fill="#fff"/>
<g transform="translate(1.500 3) scale(.82)"><use href="#tbx"/></g></svg>
<!-- python window -->
<svg class="a" style="left:395px;top:52px" width="16" height="13" viewBox="0 0 16 13">
<rect x=".5" y=".5" width="15" height="12" fill="#f7f7f7" stroke="#3c3c3c"/><rect x="1" y="1" width="14" height="2.300" fill="#2a5fbe"/><rect x="13" y="1.300" width="1.300" height="1.300" fill="#fff"/>
<path d="M3 4.300l2.200 1.500-2.200 1.500" fill="none" stroke="#000" stroke-width="1.300"/></svg>
<!-- model builder -->
<svg class="a" style="left:422px;top:51px" width="18" height="17" viewBox="0 0 18 17">
<path d="M4 3.500l5 5-5 5M9 8.500h5" stroke="#1c5a9a" stroke-width="1.100" fill="none"/>
<rect x="1" y="1" width="5" height="5" fill="#6fb5f0" stroke="#1557a8" stroke-width="1.100"/><rect x="1" y="11" width="5" height="5" fill="#6fb5f0" stroke="#1557a8" stroke-width="1.100"/>
<rect x="6.500" y="6" width="5" height="5" rx="2" fill="#fbe27a" stroke="#9a5a10" stroke-width="1.100"/><rect x="12" y="6" width="5" height="5" fill="#7cc653" stroke="#1f7a1a" stroke-width="1.100"/>
<rect x="2" y="2" width="2" height="2" fill="#cfe7fb"/><rect x="2" y="12" width="2" height="2" fill="#cfe7fb"/></svg>

<!-- ===== tools toolbar ===== -->
<!-- navigate -->
<svg class="a" style="left:467px;top:51px" width="18" height="18" viewBox="0 0 18 18">
<circle cx="9" cy="8.800" r="4" fill="url(#gglb)"/><path d="M8.500 6q2.500 0 3.500 2-.5 3-2.500 4-1.500-1-1.500-3z" fill="#6fb83a"/>
<path d="M9 .8l2.200 2.600h-4.400z M9 16.800l2.200-2.600h-4.400z M1 8.800l2.600-2.200v4.400z M17 8.800l-2.600-2.200v4.400z" fill="#000"/></svg>
<!-- fly -->
<svg class="a" style="left:489px;top:56px" width="18" height="7" viewBox="0 0 18 7"><path d="M.5 3.300q3-2.800 6.500-.3 1.200.8 1.700 2 .5-1.200 1.700-2 3.500-2.500 7-.2-3.800-.8-6 1-1.300 1-2.400 3-1.300-2-2.500-3-2.200-1.500-6-.5z" fill="#000"/></svg>
<!-- center on target -->
<svg class="a" style="left:512px;top:52px" width="15" height="15" viewBox="0 0 15 15" fill="none" stroke="#000"><circle cx="7.500" cy="7.500" r="4.300" stroke-width="1.300"/><path d="M7.500 .5v5M7.500 9.500v5M.5 7.500h5M9.500 7.500h5" stroke-width="1.300"/></svg>
<!-- zoom to target -->
<svg class="a" style="left:534px;top:52px" width="17" height="17" viewBox="0 0 17 17" fill="none" stroke="#000"><circle cx="7.500" cy="6.800" r="4.300" stroke-width="1.200"/><path d="M7.500 .5v4.500M.5 6.800h4.500M7.500 9v4" stroke-width="1.200"/><path d="M11.500 12l4 4" stroke="#8a3c24" stroke-width="2.200"/><circle cx="9.800" cy="10" r="3" fill="#f2f2f2" stroke="#555" stroke-width="1"/><circle cx="9.800" cy="10" r="1.200" stroke="#777" stroke-width=".8"/></svg>
<!-- set observer -->
<svg class="a" style="left:556px;top:52px" width="17" height="17" viewBox="0 0 17 17" fill="none" stroke="#000"><circle cx="7.500" cy="6.800" r="4.300" stroke-width="1.200"/><path d="M7.500 .5v4.500M.5 6.800h4.500" stroke-width="1.200"/><path d="M3 11q6-5.500 12-.3-6 4.800-12 .3z" fill="#f4f4f4" stroke="#444" stroke-width=".9"/><circle cx="9.700" cy="10.400" r="2.400" fill="#1f86e0" stroke="none"/><circle cx="9.700" cy="10.400" r=".9" fill="#000" stroke="none"/></svg>
<!-- zoom in / out -->
<svg class="a" style="left:583px;top:51px" width="17" height="17" viewBox="0 0 17 17"><path d="M10.800 10.800l4.700 4.700" stroke="#8a3c24" stroke-width="2.400" stroke-linecap="round"/><circle cx="7" cy="6.900" r="5.500" fill="#fafafa" stroke="#2a2a2a" stroke-width="1.200"/><path d="M3.800 6.900h6.400M7 3.700v6.400" stroke="#000" stroke-width="2"/></svg>
<svg class="a" style="left:605px;top:51px" width="17" height="17" viewBox="0 0 17 17"><path d="M10.800 10.800l4.700 4.700" stroke="#8a3c24" stroke-width="2.400" stroke-linecap="round"/><circle cx="7" cy="6.900" r="5.500" fill="#fafafa" stroke="#2a2a2a" stroke-width="1.200"/><path d="M3.800 6.900h6.400" stroke="#000" stroke-width="2"/></svg>
<!-- pan -->
<svg class="a" style="left:627px;top:51px" width="18" height="18" viewBox="0 0 18 18"><path d="M3 9.500l-1.500 1.300 5.500 6h8.500v-10l-1.200-3.500-1.200.5.500 3-1.500-5.500-1.300.3 1 5-2.300-5.500-1.300.5 1.800 5.500-3-4.500-1.200 1 3 6z" fill="#fff" stroke="#111" stroke-width="1" stroke-linejoin="round"/></svg>
<!-- full extent globe -->
<svg class="a" style="left:650px;top:51px" width="17" height="17" viewBox="0 0 17 17"><circle cx="8.400" cy="8.400" r="7.500" fill="url(#gglb)"/><path d="M8 2q4-1 6.500 2.500 1.500 4-1 7.500-3 1-4-1.500-2-2-.5-4.500-2-1-1-4z" fill="#7db63a"/><path d="M3 10q2 1 2 3.500-2-1-2-3.500z" fill="#7db63a"/></svg>
<!-- select features (disabled) -->
<svg class="a" style="left:678px;top:51px" width="28" height="17" viewBox="0 0 28 17"><rect x="5.500" y="1.500" width="10" height="10" fill="#e6e6e6" stroke="#bdbdbd"/><path d="M10 1.500l2.500 4 3-2M12.500 5.500v6" stroke="#c9c9c9" fill="none"/><path d="M1.500 2v11l3-2.500 2 4.500 2-1-2-4.300h4z" fill="#f1f1f1" stroke="#b4b4b4"/><path d="M21 8h5.500l-2.750 3z" fill="#b0b0b0"/></svg>
<svg class="a" style="left:713px;top:51px" width="13" height="13" viewBox="0 0 13 13"><rect x="1" y="1" width="10.500" height="10.500" fill="#ebebeb" stroke="#bdbdbd" stroke-width="1.100"/><path d="M3.500 1l3 4.500 3.500-2.500M6.500 5.500l1 6" stroke="#cfcfcf" fill="none"/></svg>
<!-- select elements arrow -->
<svg class="a" style="left:742px;top:52px" width="12" height="16" viewBox="0 0 12 16"><path d="M1 .8v12l3-2.600 2.300 5 2.400-1.100-2.300-4.900h4.300z" fill="#111" stroke="#000" stroke-width=".6"/></svg>
<!-- identify -->
<svg class="a" style="left:766px;top:51px" width="17" height="17" viewBox="0 0 17 17"><defs><radialGradient id="ginf" cx=".35" cy=".3" r=".8"><stop offset="0" stop-color="#7cc0ff"/><stop offset=".6" stop-color="#2767d6"/><stop offset="1" stop-color="#1440aa"/></radialGradient></defs><circle cx="8.400" cy="8.400" r="7.600" fill="url(#ginf)" stroke="#1f4dba" stroke-width=".6"/><circle cx="8.500" cy="4.300" r="1.200" fill="#fff"/><path d="M6.800 6.800h2.600v5h1.200v1.300h-4.200v-1.300h1.300v-3.700h-.9z" fill="#fff"/></svg>
<!-- html popup (disabled) -->
<svg class="a" style="left:788px;top:52px" width="17" height="16" viewBox="0 0 17 16" fill="none" stroke="#bcbcbc"><path d="M1.500 1.500h13.500v9.500h-8.500l-3.500 3.500v-3.500h-1.500z" fill="#f3f3f3" stroke-width="1.100"/><rect x="4" y="5" width="2.500" height="3" stroke-width=".9"/><path d="M4 3.500h4.500M8 5.500h5M8 7.500h5M8 9.300h3.500" stroke-width=".9"/></svg>
<!-- find (binoculars) -->
<svg class="a" style="left:816px;top:51px" width="17" height="17" viewBox="0 0 17 17"><defs><linearGradient id="gbin" x1="0" y1="0" x2="1" y2="0"><stop offset="0" stop-color="#2b2b2b"/><stop offset=".5" stop-color="#8a8a8a"/><stop offset="1" stop-color="#2b2b2b"/></linearGradient></defs>
<path d="M3.500 1h3.500v3l1 1.500v10.500h-6.500v-5z" fill="url(#gbin)" stroke="#1e1e1e" stroke-width=".6"/><path d="M13.500 1h-3.500v3l-1 1.500v10.500h6.500v-5z" fill="url(#gbin)" stroke="#1e1e1e" stroke-width=".6"/><rect x="7" y="5" width="3" height="4" fill="#333"/><path d="M1.500 11h6M9.500 11h6M3.500 3.500h3.500M10 3.500h3.500" stroke="#1a1a1a" stroke-width=".9"/></svg>
<!-- measure -->
<svg class="a" style="left:844px;top:52px" width="18" height="16" viewBox="0 0 18 16"><path d="M1.500 3.500l4-3v2h2.500v2h-2.500v2z M16.500 3.500l-4-3v2h-2.500v2h2.500v2z" fill="#1757a8"/><path d="M3 7.500q6 1.500 12 0" stroke="#cfd6df" stroke-width="1" fill="none"/>
<rect x="1" y="9.200" width="16" height="5.800" fill="#a9662a" stroke="#7b4514" stroke-width=".7"/><path d="M3 11v3.500M5 12v2.500M7 11v3.500M9 12v2.500M11 11v3.500M13 12v2.500M15 11v3.500" stroke="#fff" stroke-width="1"/><path d="M1 9.700h16" stroke="#d79a52" stroke-width="1"/></svg>
<!-- time slider (disabled) -->
<svg class="a" style="left:872px;top:51px" width="18" height="17" viewBox="0 0 18 17" fill="none" stroke="#c2c2c2"><rect x="1.500" y="1.500" width="15" height="12" fill="#e8e8e8"/><rect x="1.500" y="1.500" width="15" height="2.500" fill="#c4c4c4" stroke="none"/><circle cx="8.700" cy="10" r="5.300" fill="#ececec" stroke-width="1.200"/><path d="M8.700 6.500v3.700l2.300 1.800" stroke-width="1.100"/></svg>
<!-- 3D box -->
<svg class="a" style="left:900px;top:51px" width="18" height="18" viewBox="0 0 18 18"><path d="M1.600 11.500l7-4.300 7.600 2.800-5.900 6.300z" fill="#c8e46c"/><path d="M1.600 5.200l7-4 7.600 3.600-5.900 4.400zM1.600 11.500l7-4.300 7.600 2.800-5.900 6.300zM1.600 5.200v6.300M8.600 1.200v6M16.200 4.800v5.200M10.300 9.200v7.100" fill="none" stroke="#2233e8" stroke-width="1.150" stroke-linejoin="round"/><g fill="#000"><circle cx="1.600" cy="5.200" r=".85"/><circle cx="8.600" cy="1.200" r=".85"/><circle cx="16.200" cy="4.800" r=".85"/><circle cx="10.300" cy="16.300" r=".85"/><circle cx="1.600" cy="11.500" r=".85"/><circle cx="16.200" cy="10" r=".85"/></g></svg>

<!-- ===== layer combo icons ===== -->
<svg class="a" style="left:12px;top:77px" width="17" height="16" viewBox="0 0 17 16"><use href="#lasico"/></svg>
<svg class="a" style="left:214px;top:130px" width="17" height="16" viewBox="0 0 17 16"><use href="#lasico"/></svg>
<!-- disabled toolbar2 icons -->
<svg class="a" style="left:192px;top:78px" width="17" height="17" viewBox="0 0 17 17" fill="none" stroke="#c4c4c4" stroke-width="1"><path d="M1 6q4-6 9-3 3 2 1 5-2 2-4 0-1-2 1-2.500M3 10q3-5 7-3M1 13q2-6 6-4 4 2 1 6M11 11q3 1 2 5M5 16q1-3 3-3"/></svg>
<svg class="a" style="left:214px;top:78px" width="18" height="17" viewBox="0 0 18 17" fill="none" stroke="#c4c4c4" stroke-width="1"><path d="M1 16l5-7 3 3 3-5 5 9z" fill="#dedede"/><path d="M4 1l5 5M9 6v-3M9 6h-3M3 16l4-4M3 16v-3M3 16h3"/></svg>

<!-- ===== TOC toolbar icons ===== -->
<svg class="a" style="left:6px;top:123px" width="18" height="18" viewBox="0 0 18 18">
<path d="M4.500 6v9.500h4M4.500 9.500h4" fill="none" stroke="#9db4cc" stroke-width="1"/>
<path d="M1 3l3-2 3 2-3 2z M1 5l3-2 3 2-3 2z" fill="#f6d58a" stroke="#d9a544" stroke-width=".7"/>
<path d="M7 8l3-2.500 3 2.500-3 2.500z M7 14.500l3-2.500 3 2.500-3 2.500z" fill="#f8dc9a" stroke="#d9a544" stroke-width=".7"/>
<path d="M14 8h3M14 14.500h3" stroke="#1d5c94" stroke-width="1.300"/></svg>
<svg class="a" style="left:30px;top:123px" width="14" height="18" viewBox="0 0 14 18">
<defs><linearGradient id="gcyl" x1="0" y1="0" x2="1" y2="0"><stop offset="0" stop-color="#8fa3bd"/><stop offset=".4" stop-color="#eef3f9"/><stop offset="1" stop-color="#4f627e"/></linearGradient></defs>
<path d="M1 11h12l-6 6.500z" fill="url(#gdia)" stroke="#d9a544" stroke-width=".6"/>
<path d="M2 2.500v7q5 2.500 10 0v-7z" fill="url(#gcyl)"/><ellipse cx="7" cy="2.500" rx="5" ry="1.700" fill="#dfe7f0" stroke="#7f8ea4" stroke-width=".5"/></svg>
<svg class="a" style="left:50px;top:123px" width="18" height="18" viewBox="0 0 18 18">
<path d="M1 12l8-5 8 5-8 5.500z" fill="url(#gdia)" stroke="#d9a544" stroke-width=".6"/>
<rect x="4.500" y="1.500" width="9" height="9" fill="#fff" stroke="#333" stroke-width="1.200"/><path d="M5 2h3.500l1.500 4.500 1 3.500h-6z" fill="#12c6e6"/><path d="M9 3.500l2.500-.5" stroke="#555" stroke-width="1"/></svg>
<!-- scene layers icon -->
<svg class="a" style="left:4px;top:149px" width="18" height="14" viewBox="0 0 18 14">
<path d="M1 12.500l4-3h12l-4 3z" fill="#f3cf86" stroke="#d89a3a" stroke-width=".7"/><path d="M1 9l4-3h12l-4 3z" fill="#f6d792" stroke="#d89a3a" stroke-width=".7"/><path d="M1 5.500l4-4h12l-4 4z" fill="#f2c878" stroke="#d89a3a" stroke-width=".7"/></svg>

<!-- ===== LAS toolbar icons ===== -->
<svg class="a" style="left:402px;top:132px" width="15" height="15" viewBox="0 0 15 15" shape-rendering="crispEdges">
<g fill="#808080"><rect x="0" y="0" width="2" height="2"/><rect x="3" y="0" width="4" height="2"/><rect x="8" y="0" width="3" height="2"/><rect x="12" y="0" width="2" height="2"/>
<rect x="0" y="3" width="2" height="2"/><rect x="9" y="3" width="2" height="2"/><rect x="0" y="6" width="2" height="3"/><rect x="12" y="5" width="2" height="2"/><rect x="9" y="6" width="2" height="2"/>
<rect x="3" y="9" width="2" height="2"/><rect x="6" y="8" width="2" height="2"/><rect x="8" y="7" width="2" height="2"/><rect x="12" y="8" width="2" height="2"/><rect x="6" y="11" width="2" height="1"/><rect x="10" y="10" width="2" height="2"/>
<rect x="0" y="11" width="2" height="3"/><rect x="4" y="12" width="2" height="2"/><rect x="9" y="12" width="2" height="2"/><rect x="12" y="12" width="2" height="2"/></g>
<g fill="#f00"><rect x="3" y="3" width="2" height="2"/><rect x="6" y="2" width="2" height="2"/><rect x="3" y="6" width="2" height="2"/><rect x="6" y="5" width="2" height="2"/></g>
<g fill="#0c3"><rect x="12" y="3" width="2" height="2"/><rect x="2" y="9" width="2" height="2"/><rect x="6" y="12" width="2" height="2"/></g></svg>
<svg class="a" style="left:434px;top:131px" width="16" height="16" viewBox="0 0 16 16">
<defs><radialGradient id="gsurf" cx=".5" cy=".5" r=".65"><stop offset="0" stop-color="#9c1608"/><stop offset=".33" stop-color="#cc3a0c"/><stop offset=".56" stop-color="#f0b81c"/><stop offset=".8" stop-color="#d2bc22"/><stop offset="1" stop-color="#3f9a2e"/></radialGradient></defs>
<rect x=".5" y=".5" width="15" height="15" fill="url(#gsurf)" stroke="#4a4a4a"/><path d="M7 5.400l3.200 2-3.200 2z" fill="#fff" opacity=".95"/></svg>

</div>
</body></html>
